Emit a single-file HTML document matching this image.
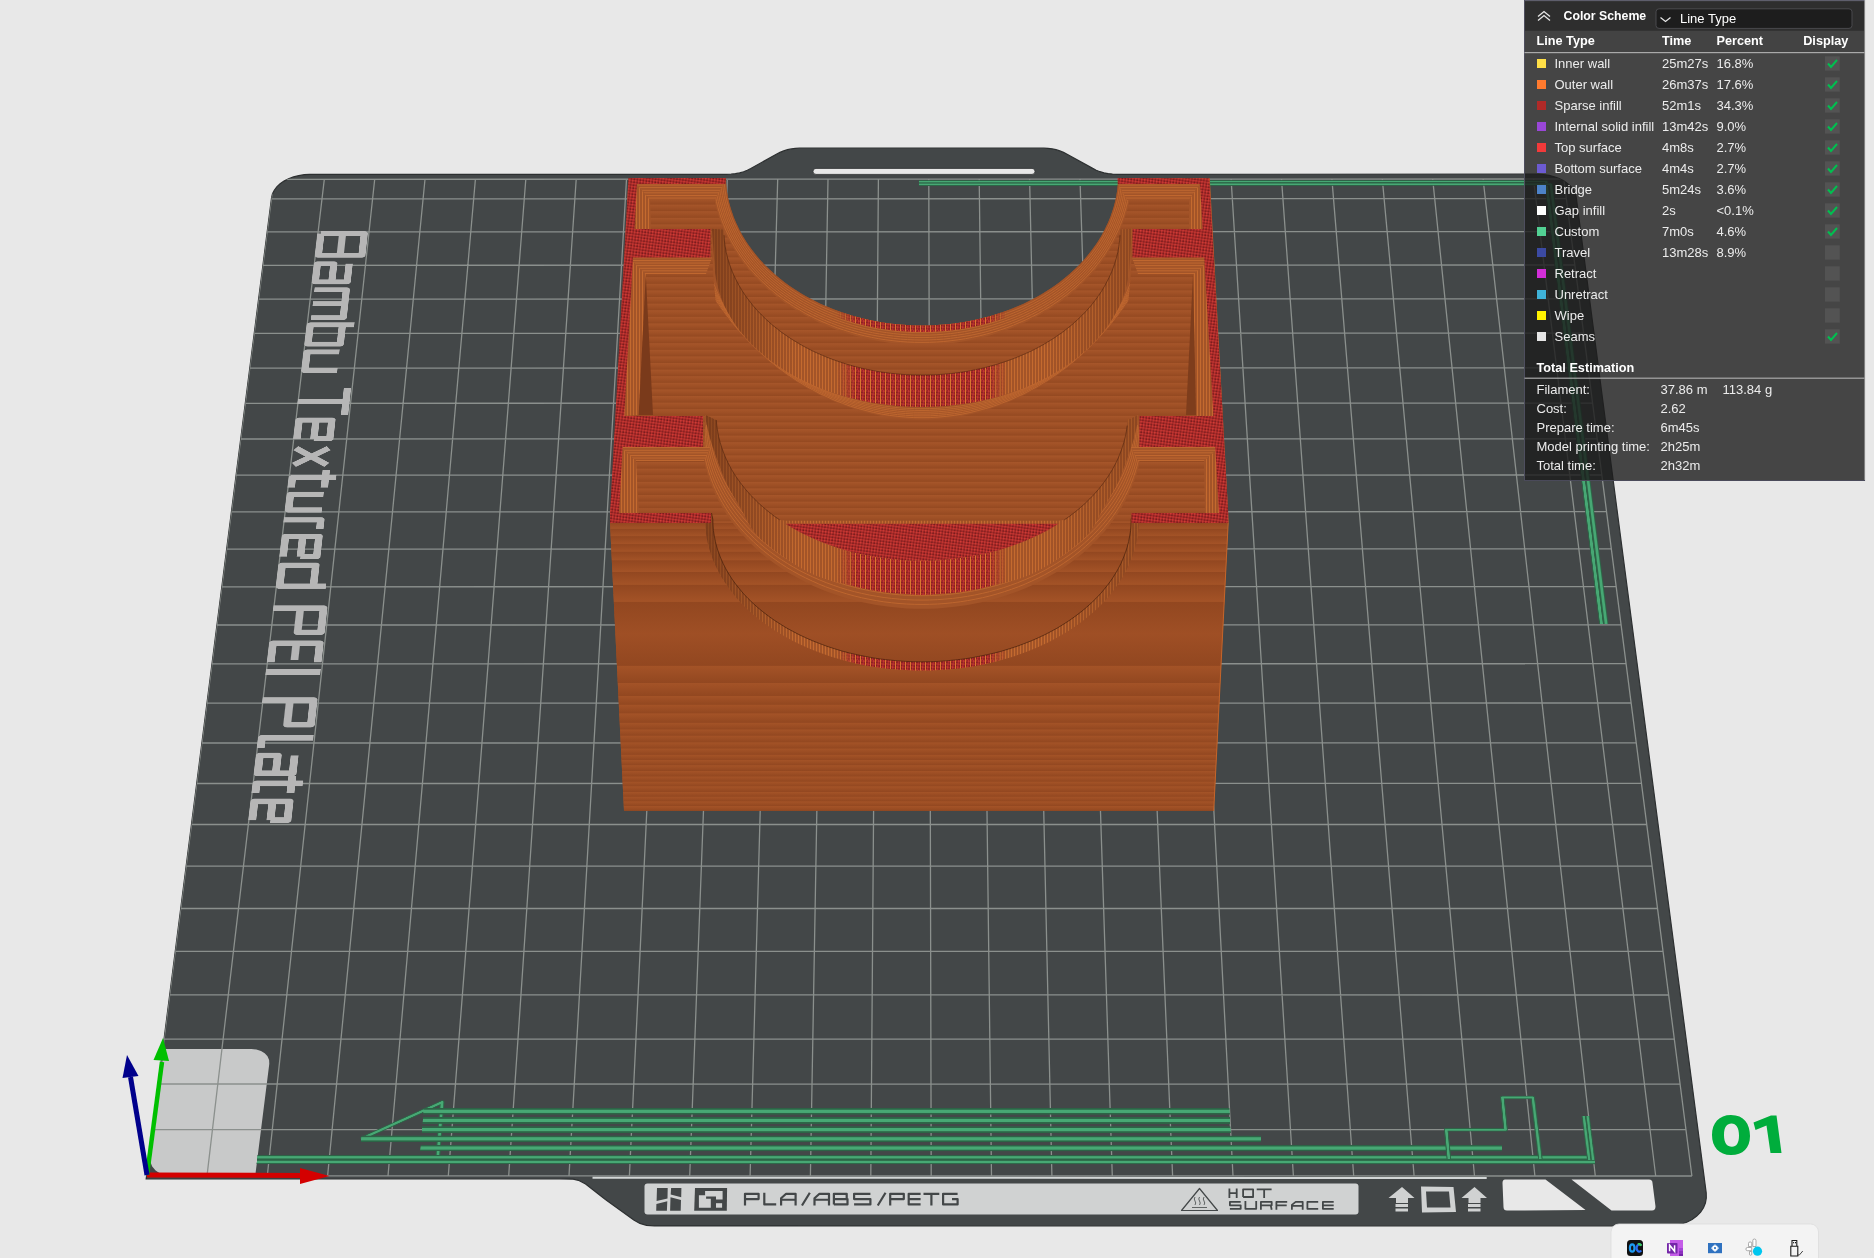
<!DOCTYPE html>
<html><head><meta charset="utf-8"><style>
html,body{margin:0;padding:0;width:1874px;height:1258px;overflow:hidden;background:#e8e8e8;}
.layer{position:absolute;left:0;top:0;}
#ptext{position:absolute;left:0;top:0;transform-origin:0 0;transform:matrix3d(0.503621723,-0.000132204081,0,-1.39485426e-07,-0.0591998042,0.313364712,0,-6.45599567e-05,0,0,1,0,273.934944,179.323232,0,1);}
#pgreen{position:absolute;left:0;top:0;transform-origin:0 0;transform:matrix3d(0.503621723,-0.000132204081,0,-1.39485426e-07,-0.0591998042,0.313364712,0,-6.45599567e-05,0,0,1,0,273.934944,179.323232,0,1);}
#ptext div{position:absolute;left:0;top:0;white-space:nowrap;font-family:"Liberation Sans",sans-serif;color:#b4b4b4;font-size:140px;line-height:1;transform-origin:0 0;}
</style></head><body>
<svg class="layer" width="1874" height="1258" viewBox="0 0 1874 1258">
<path d="M271.6 197.3 L272.5 193.7 L274.3 190.2 L276.8 186.9 L280.1 183.8 L284 181.1 L288.5 178.8 L293.5 176.9 L298.8 175.6 L304.2 174.7 L309.8 174.4 L726.5 174.4 L731.1 174.2 L735.4 173.7 L739.6 172.9 L743.6 171.8 L747.3 170.3 L750.8 168.5 L776.3 154.3 L780 152.4 L783.7 150.9 L787.5 149.7 L791.4 148.9 L795.4 148.4 L799.6 148.2 L1043.9 148.2 L1048 148.3 L1052.1 148.8 L1056 149.7 L1059.8 150.9 L1063.5 152.4 L1067.1 154.3 L1092.7 168.4 L1096.2 170.2 L1100 171.7 L1103.9 172.8 L1108.1 173.6 L1112.5 174.1 L1117.1 174.3 L1538 174.2 L1543.5 174.5 L1549 175.3 L1554.3 176.7 L1559.2 178.5 L1563.7 180.8 L1567.7 183.6 L1571 186.6 L1573.5 189.9 L1575.3 193.4 L1576.2 197 L1706.2 1192.8 L1706.3 1198 L1705.4 1203 L1703.5 1207.8 L1700.6 1212.2 L1696.7 1216.1 L1692.1 1219.5 L1686.7 1222.2 L1680.8 1224.2 L1674.5 1225.4 L1667.8 1225.8 L654.4 1225.9 L646.5 1225.3 L639.9 1223.4 L633.8 1219.9 L605.4 1199.5 L585.6 1184 L578.4 1180.3 L573.1 1179.2 L559.8 1178.8 L146.2 1178.8 Z" fill="#434748" stroke="#2d3031" stroke-width="1.2"/>
<rect x="813" y="168.4" width="222" height="6" rx="3" fill="#e8e8e8" stroke="#2d3031" stroke-width="0.8"/>
<path d="M164.1 1048.1 L150.2 1157.3 L150.4 1162.1 L152.2 1166.6 L155.6 1170.4 L160.2 1173.4 L165.8 1175.2 L172 1175.9 L255.2 1175.9 L269.3 1063.7 L269.1 1059.9 L267.5 1056.3 L264.7 1053.3 L261 1050.9 L256.4 1049.5 L251.4 1049 L164 1049 Z" fill="#c8c9c9"/>
<clipPath id="pclip"><path d="M271.6 197.3 L272.5 193.7 L274.3 190.2 L276.8 186.9 L280.1 183.8 L284 181.1 L288.5 178.8 L293.5 176.9 L298.8 175.6 L304.2 174.7 L309.8 174.4 L726.5 174.4 L731.1 174.2 L735.4 173.7 L739.6 172.9 L743.6 171.8 L747.3 170.3 L750.8 168.5 L776.3 154.3 L780 152.4 L783.7 150.9 L787.5 149.7 L791.4 148.9 L795.4 148.4 L799.6 148.2 L1043.9 148.2 L1048 148.3 L1052.1 148.8 L1056 149.7 L1059.8 150.9 L1063.5 152.4 L1067.1 154.3 L1092.7 168.4 L1096.2 170.2 L1100 171.7 L1103.9 172.8 L1108.1 173.6 L1112.5 174.1 L1117.1 174.3 L1538 174.2 L1543.5 174.5 L1549 175.3 L1554.3 176.7 L1559.2 178.5 L1563.7 180.8 L1567.7 183.6 L1571 186.6 L1573.5 189.9 L1575.3 193.4 L1576.2 197 L1706.2 1192.8 L1706.3 1198 L1705.4 1203 L1703.5 1207.8 L1700.6 1212.2 L1696.7 1216.1 L1692.1 1219.5 L1686.7 1222.2 L1680.8 1224.2 L1674.5 1225.4 L1667.8 1225.8 L654.4 1225.9 L646.5 1225.3 L639.9 1223.4 L633.8 1219.9 L605.4 1199.5 L585.6 1184 L578.4 1180.3 L573.1 1179.2 L559.8 1178.8 L146.2 1178.8 Z"/></clipPath>
<path d="M146.6 1175.9L1691.9 1176M152.5 1129.6L1685.9 1129.7M158.3 1084L1680.1 1084.1M164.1 1039.1L1674.3 1039.2M169.7 994.9L1668.6 995M175.3 951.4L1663 951.4M180.8 908.5L1657.5 908.5M186.2 866.2L1652.1 866.2M191.5 824.5L1646.7 824.5M196.7 783.5L1641.4 783.4M201.9 743L1636.2 742.9M207 703.1L1631.1 703M212 663.8L1626 663.7M217 625L1621.1 624.9M221.9 586.8L1616.1 586.6M226.7 549.1L1611.3 548.9M231.4 511.9L1606.5 511.7M236.1 475.2L1601.8 475M240.8 439L1597.2 438.8M245.3 403.3L1592.6 403.1M249.8 368.1L1588 367.9M254.3 333.4L1583.6 333.1M258.6 299.1L1579.2 298.8M263 265.3L1574.8 265M267.2 231.9L1570.5 231.6M271.4 198.9L1566.3 198.6M273.9 179.3L1563.8 179M146.6 1175.9L273.9 179.3M207 1175.9L324.3 179.3M267.3 1175.9L374.7 179.3M327.6 1175.9L425 179.3M388 1175.9L475.4 179.3M448.3 1175.9L525.8 179.3M508.7 1175.9L576.2 179.3M569 1175.9L626.5 179.2M629.4 1175.9L676.9 179.2M689.7 1175.9L727.3 179.2M750.1 1175.9L777.7 179.2M810.4 1175.9L828 179.2M870.8 1175.9L878.4 179.2M931.2 1175.9L928.8 179.2M991.5 1175.9L979.2 179.2M1051.9 1175.9L1029.6 179.2M1112.3 1175.9L1080 179.2M1172.6 1175.9L1130.4 179.1M1233 1175.9L1180.8 179.1M1293.4 1176L1231.1 179.1M1353.7 1176L1281.5 179.1M1414.1 1176L1331.9 179.1M1474.5 1176L1382.3 179.1M1534.9 1176L1432.7 179.1M1595.3 1176L1483.1 179.1M1655.7 1176L1533.5 179.1M1691.9 1176L1563.8 179" stroke="#8b908d" stroke-width="1.3" fill="none" clip-path="url(#pclip)"/>
<path d="M592.5 1177.8L1486.7 1177.9" stroke="#d2d6d6" stroke-width="2"/>
<rect x="644.5" y="1183.5" width="714" height="31" rx="3" fill="#d0d2d2"/>
<g fill="#434748"><path d="M657 1188.1 L667.7 1188.1 L667.5 1198.5 L656.6 1200.9 Z M656.4 1204.1 L667.3 1201.3 L666.9 1210.7 L656.2 1210.7 Z M671.1 1188.1 L681.4 1188.1 L681.2 1197.2 L670.7 1194.5 Z M670.5 1197.2 L681 1200 L680.7 1210.7 L670.1 1210.7 Z"/><path d="M695 1188.1 L727.1 1188.1 L726.8 1210.7 L694.2 1210.7 Z"/></g><g fill="#d0d2d2"><path d="M705.1 1191 L722.6 1191 L722.6 1199.6 L716 1199.6 L716 1196.4 L706.1 1196.4 L706.1 1198.7 L710.8 1198.7 L710.8 1207.7 L698.9 1207.7 L698.9 1195.3 L705.1 1195.3 Z"/><rect x="716" y="1203.2" width="6.1" height="4.5"/></g>
<path d="M745.00 1205.50 L745.00 1193.80 L758.60 1193.80 L758.60 1199.10 L745.00 1199.10M764.30 1192.70 L764.30 1204.40 L776.20 1204.40M781.10 1205.50 L781.10 1198.25 L786.11 1193.80 L795.60 1193.80 L795.60 1205.50M781.10 1199.74 L795.60 1199.74M801.98 1205.50 L809.82 1192.70M814.50 1205.50 L814.50 1198.25 L819.51 1193.80 L829.00 1193.80 L829.00 1205.50M814.50 1199.74 L829.00 1199.74M833.90 1204.40 L833.90 1193.80 L846.70 1193.80 L846.70 1199.10 L847.50 1199.10 L847.50 1204.40 L833.90 1204.40M833.90 1199.10 L847.50 1199.10M870.40 1193.80 L854.10 1193.80 L854.10 1199.10 L870.40 1199.10 L870.40 1204.40 L854.10 1204.40M877.77 1205.50 L885.53 1192.70M890.20 1205.50 L890.20 1193.80 L903.80 1193.80 L903.80 1199.10 L890.20 1199.10M920.60 1193.80 L908.70 1193.80 L908.70 1204.40 L920.60 1204.40M908.70 1199.10 L920.60 1199.10M923.50 1193.80 L939.30 1193.80M931.40 1193.80 L931.40 1205.50M957.60 1193.80 L943.10 1193.80 L943.10 1204.40 L957.60 1204.40 L957.60 1199.10 L952.02 1199.10" stroke="#434748" stroke-width="2.20" fill="none" stroke-linejoin="round"/><path d="M1229.40 1197.90 L1229.40 1188.40M1236.70 1197.90 L1236.70 1188.40M1229.40 1193.15 L1236.70 1193.15M1243.10 1197.00 L1243.10 1189.30 L1253.10 1189.30 L1253.10 1197.00 L1243.10 1197.00M1256.70 1189.30 L1271.60 1189.30M1264.15 1189.30 L1264.15 1197.90" stroke="#434748" stroke-width="1.80" fill="none" stroke-linejoin="round"/><path d="M1240.70 1201.90 L1229.90 1201.90 L1229.90 1205.35 L1240.70 1205.35 L1240.70 1208.80 L1229.90 1208.80M1245.40 1201.00 L1245.40 1208.80 L1256.20 1208.80 L1256.20 1201.00M1260.90 1209.70 L1260.90 1201.90 L1271.70 1201.90 L1271.70 1205.35 L1260.90 1205.35M1270.70 1205.35 L1271.70 1209.70M1287.20 1201.90 L1276.40 1201.90 L1276.40 1209.70M1276.40 1205.35 L1286.70 1205.35M1291.90 1209.70 L1291.90 1204.86 L1295.68 1201.90 L1302.70 1201.90 L1302.70 1209.70M1291.90 1205.79 L1302.70 1205.79M1318.20 1201.90 L1307.40 1201.90 L1307.40 1208.80 L1318.20 1208.80M1333.70 1201.90 L1322.90 1201.90 L1322.90 1208.80 L1333.70 1208.80M1322.90 1205.35 L1333.70 1205.35" stroke="#434748" stroke-width="1.80" fill="none" stroke-linejoin="round"/>
<path d="M1199.5 1188.5 L1217.5 1210.5 L1181.5 1210.5 Z" fill="none" stroke="#434748" stroke-width="1.2" stroke-linejoin="round"/><path d="M1195 1197 q-1.5 2 0 4 q1.5 2 0 4 M1199.5 1197 q-1.5 2 0 4 q1.5 2 0 4 M1204 1197 q-1.5 2 0 4 q1.5 2 0 4 M1192 1207.5 h15" fill="none" stroke="#434748" stroke-width="0.8"/>
<g fill="#d0d2d2"><path d="M1388.5 1198 L1402 1187 L1414.5 1198 L1408 1198 L1408 1203 L1396 1203 L1396 1198 Z"/><rect x="1395.5" y="1204" width="12.5" height="3"/><rect x="1395.5" y="1208.5" width="12.5" height="3"/><path d="M1461.5 1198 L1474.5 1187 L1487 1198 L1480.5 1198 L1480.5 1203 L1468.5 1203 L1468.5 1198 Z"/><rect x="1468" y="1204" width="12.5" height="3"/><rect x="1468" y="1208.5" width="12.5" height="3"/></g>
<path d="M1421 1186.5 L1453.5 1187 L1456 1212 L1422 1212.5 Z M1426 1191.5 L1449 1191.5 L1450.5 1207.5 L1427 1207.5 Z" fill="#d0d2d2" fill-rule="evenodd"/>
<path d="M1505 1179.5 L1545.5 1179.5 L1585.5 1210 L1507 1210.5 Q1503.5 1210.5 1503.5 1207 L1502.5 1183 Q1502.5 1179.5 1505 1179.5 Z" fill="#e8e8e8"/>
<path d="M1571.5 1179.5 L1649 1179.5 Q1652.5 1179.5 1652.5 1183 L1655.5 1206.5 Q1655.5 1210.5 1652 1210.5 L1611.5 1210.5 Z" fill="#e8e8e8"/>
<path d="M1731 1115 C1744 1115 1750 1124 1750 1136 C1750 1148 1743 1155 1731 1155 C1719 1155 1712 1147 1712 1135 C1712 1123 1719 1115 1731 1115 Z M1731.5 1123.5 C1727 1123.5 1724 1127 1724 1135 C1724 1143 1727 1146.8 1732 1146.8 C1736.5 1146.8 1739 1143 1739 1135.5 C1739 1127.5 1736 1123.5 1731.5 1123.5 Z" fill="#00ad3c" fill-rule="evenodd"/>
<path d="M1753.5 1122.5 L1771 1115.5 L1776.5 1115.5 L1781.5 1153 L1770.5 1153 L1766.5 1125.5 L1755.5 1130 Z" fill="#00ad3c"/>
<path d="M147 1175 L302 1175.5" stroke="#d40000" stroke-width="5"/><path d="M300 1168 L329.5 1176 L300 1184 Z" fill="#d40000"/>
<path d="M147 1175 L162 1062" stroke="#00c000" stroke-width="4.5"/><path d="M153.5 1060 L163 1038 L169 1061 Z" fill="#00c000"/>
<path d="M147 1175 L130.5 1077" stroke="#00008c" stroke-width="5"/><path d="M122.5 1078 L127 1055 L138.5 1076 Z" fill="#00008c"/>
</svg>
<div id="pgreen"><svg width="2600" height="2800" style="position:absolute;left:0;top:-200px;overflow:visible" viewBox="0 -200 2600 2800"><path d="M350 2480 L480 2400 L480 2520" stroke="#2c6446" stroke-width="8.0" fill="none" stroke-linejoin="round"/><path d="M350 2480 L480 2400 L480 2520" stroke="#47a874" stroke-width="4.5" fill="none" stroke-linejoin="round"/><path d="M180 2530 L2402 2530" stroke="#2c6446" stroke-width="10.0" fill="none" stroke-linejoin="round"/><path d="M180 2530 L2402 2530" stroke="#47a874" stroke-width="5.0" fill="none" stroke-linejoin="round"/><path d="M180 2520 L2402 2520" stroke="#2c6446" stroke-width="10.0" fill="none" stroke-linejoin="round"/><path d="M180 2520 L2402 2520" stroke="#47a874" stroke-width="5.0" fill="none" stroke-linejoin="round"/><path d="M450 2420 L1800 2420" stroke="#2c6446" stroke-width="14.0" fill="none" stroke-linejoin="round"/><path d="M450 2420 L1800 2420" stroke="#47a874" stroke-width="6.8" fill="none" stroke-linejoin="round"/><path d="M450 2440 L1800 2440" stroke="#2c6446" stroke-width="14.0" fill="none" stroke-linejoin="round"/><path d="M450 2440 L1800 2440" stroke="#47a874" stroke-width="6.8" fill="none" stroke-linejoin="round"/><path d="M450 2460 L1800 2460" stroke="#2c6446" stroke-width="14.0" fill="none" stroke-linejoin="round"/><path d="M450 2460 L1800 2460" stroke="#47a874" stroke-width="6.8" fill="none" stroke-linejoin="round"/><path d="M350 2480 L1850 2480" stroke="#2c6446" stroke-width="14.0" fill="none" stroke-linejoin="round"/><path d="M350 2480 L1850 2480" stroke="#47a874" stroke-width="6.8" fill="none" stroke-linejoin="round"/><path d="M450 2500 L2250 2500" stroke="#2c6446" stroke-width="14.0" fill="none" stroke-linejoin="round"/><path d="M450 2500 L2250 2500" stroke="#47a874" stroke-width="6.8" fill="none" stroke-linejoin="round"/><path d="M2160 2524 L2160 2460 L2259 2460 L2259 2389.5 L2310 2389.5 L2312 2524" stroke="#2c6446" stroke-width="7.5" fill="none" stroke-linejoin="round"/><path d="M2160 2524 L2160 2460 L2259 2460 L2259 2389.5 L2310 2389.5 L2312 2524" stroke="#47a874" stroke-width="4.0" fill="none" stroke-linejoin="round"/><path d="M2393 2526 L2392 2430" stroke="#2c6446" stroke-width="7.0" fill="none" stroke-linejoin="round"/><path d="M2393 2526 L2392 2430" stroke="#47a874" stroke-width="3.8" fill="none" stroke-linejoin="round"/><path d="M2399.5 2526 L2398.5 2430" stroke="#2c6446" stroke-width="7.0" fill="none" stroke-linejoin="round"/><path d="M2399.5 2526 L2398.5 2430" stroke="#47a874" stroke-width="3.8" fill="none" stroke-linejoin="round"/><path d="M1280 7.5 L2524.5 7.5 L2524.5 1258" stroke="#2c6446" stroke-width="8.5" fill="none" stroke-linejoin="round"/><path d="M1280 7.5 L2524.5 7.5 L2524.5 1258" stroke="#47a874" stroke-width="5.0" fill="none" stroke-linejoin="round"/><path d="M1280 16 L2533 16 L2533 1258" stroke="#2c6446" stroke-width="8.5" fill="none" stroke-linejoin="round"/><path d="M1280 16 L2533 16 L2533 1258" stroke="#47a874" stroke-width="5.0" fill="none" stroke-linejoin="round"/><path d="M106.0 165.1 L191.0 165.1 L191.0 230.6 L106.0 230.6 L106.0 165.1M148.5 165.1 L148.5 230.6M168.0 255.6 L168.0 309.2 L106.0 309.2 L106.0 255.6 L138.0 255.6 L138.0 309.2M106.0 332.4 L168.0 332.4 L168.0 414.2 L106.0 414.2M168.0 373.3 L106.0 373.3M191.0 435.2 L106.0 435.2 L106.0 491.0 L168.0 491.0 L168.0 435.2M168.0 513.6 L106.0 513.6 L106.0 567.0 L168.0 567.0M191.0 616.4 L191.0 692.9M191.0 654.6 L99.0 654.6M138.0 759.1 L168.0 759.1 L168.0 707.2 L106.0 707.2 L106.0 759.1M138.0 707.2 L138.0 759.1M168.0 785.3 L106.0 831.6M106.0 785.3 L168.0 831.6M188.1 866.6 L106.0 866.6 L106.0 893.8M168.0 845.7 L168.0 893.8M168.0 912.7 L106.0 912.7 L106.0 954.7 L168.0 954.7M99.0 981.4 L168.0 981.4 L168.0 1006.4M138.0 1080.0 L168.0 1080.0 L168.0 1026.1 L106.0 1026.1 L106.0 1080.0M138.0 1026.1 L138.0 1080.0M191.0 1158.6 L106.0 1158.6 L106.0 1103.3 L168.0 1103.3 L168.0 1158.6M99.0 1215.9 L191.0 1215.9 L191.0 1278.9 L148.5 1278.9 L148.5 1215.9M191.0 1356.2 L191.0 1307.2 L106.0 1307.2 L106.0 1356.2M148.5 1307.2 L148.5 1350.2M198.0 1380.9 L99.0 1380.9M99.0 1452.3 L191.0 1452.3 L191.0 1514.3 L148.5 1514.3 L148.5 1452.3M198.0 1547.1 L106.0 1547.1 L106.0 1573.1M168.0 1591.1 L168.0 1635.1 L106.0 1635.1 L106.0 1591.1 L138.0 1591.1 L138.0 1635.1M188.1 1659.8 L106.0 1659.8 L106.0 1683.7M168.0 1640.9 L168.0 1683.7M138.0 1749.3 L168.0 1749.3 L168.0 1704.0 L106.0 1704.0 L106.0 1749.3M138.0 1704.0 L138.0 1749.3" stroke="#b6b6b6" stroke-width="14.0" fill="none" stroke-linejoin="round" stroke-linecap="butt"/></svg></div>

<svg class="layer" width="1874" height="1258" viewBox="0 0 1874 1258">
<defs>
<linearGradient id="wg" x1="0" y1="0" x2="0" y2="1"><stop offset="0" stop-color="#a7562a"/><stop offset="0.55" stop-color="#9d4f25"/><stop offset="1" stop-color="#944921"/></linearGradient>
<pattern id="wall" patternUnits="userSpaceOnUse" width="10" height="6.6"><rect width="10" height="6.6" fill="url(#wg)"/></pattern>
<pattern id="red" patternUnits="userSpaceOnUse" width="3" height="3" patternTransform="rotate(8)"><rect width="3" height="3" fill="#ad2b2a"/><rect x="0" y="0" width="1.5" height="1.5" fill="#d23d36"/><rect x="1.5" y="1.5" width="1.4" height="1.4" fill="#681718"/></pattern>
<pattern id="vst" patternUnits="userSpaceOnUse" width="3" height="10"><rect width="3" height="10" fill="#a35428"/><rect x="0" width="1" height="10" fill="#c46a2f"/></pattern>
<pattern id="ring" patternUnits="userSpaceOnUse" width="10" height="2.6"><rect width="10" height="2.6" fill="#a35428"/><rect width="10" height="0.9" fill="#c26930"/></pattern>
<pattern id="redv" patternUnits="userSpaceOnUse" width="5" height="10"><rect width="5" height="10" fill="url(#red)"/><rect x="0" width="1" height="10" fill="#d9772f"/></pattern>
<linearGradient id="gRed" gradientUnits="userSpaceOnUse" x1="780" y1="0" x2="1064" y2="0"><stop offset="0" stop-color="#000"/><stop offset="0.2" stop-color="#000"/><stop offset="0.27" stop-color="#fff"/><stop offset="0.73" stop-color="#fff"/><stop offset="0.8" stop-color="#000"/><stop offset="1" stop-color="#000"/></linearGradient>
<mask id="mRed" maskUnits="userSpaceOnUse" x="0" y="0" width="1874" height="1258"><rect width="1874" height="1258" fill="url(#gRed)"/></mask>
<linearGradient id="gShade" gradientUnits="userSpaceOnUse" x1="700" y1="0" x2="1144" y2="0"><stop offset="0" stop-color="#5e2b12" stop-opacity="0.6"/><stop offset="0.22" stop-color="#5e2b12" stop-opacity="0"/><stop offset="0.78" stop-color="#5e2b12" stop-opacity="0"/><stop offset="1" stop-color="#5e2b12" stop-opacity="0.35"/></linearGradient>
<linearGradient id="gUp" x1="0" y1="0" x2="0" y2="1"><stop offset="0" stop-color="#924720"/><stop offset="1" stop-color="#a45327"/></linearGradient>
<linearGradient id="gDn" x1="0" y1="0" x2="0" y2="1"><stop offset="0" stop-color="#a45327"/><stop offset="1" stop-color="#924720"/></linearGradient>
<linearGradient id="gMid" x1="0" y1="0" x2="0" y2="1"><stop offset="0" stop-color="#924720"/><stop offset="0.5" stop-color="#9f4f25"/><stop offset="1" stop-color="#924720"/></linearGradient>
<clipPath id="frontclip"><path d="M610 522.7 L1228.2 522.7 L1213.7 810.8 L624 810.8 Z"/></clipPath>
</defs>
<path d="M628.5 178 L725.8 178 L726.1 183.8 L726.7 189.7 L727.6 195.5 L728.8 201.2 L730.3 207 L732.1 212.6 L734.1 218.3 L736.5 223.8 L739.1 229.3 L742 234.7 L745.1 240 L748.6 245.2 L752.3 250.3 L756.2 255.3 L760.4 260.2 L764.8 264.9 L769.5 269.6 L774.4 274 L779.5 278.3 L784.8 282.5 L790.3 286.5 L796.1 290.3 L802 294 L808.1 297.5 L814.4 300.8 L820.8 303.9 L827.4 306.8 L834.1 309.5 L841 312 L847.9 314.3 L855 316.4 L862.2 318.3 L869.5 320 L876.8 321.4 L884.3 322.7 L891.7 323.7 L899.3 324.5 L906.8 325 L914.4 325.4 L922 325.5 L929.6 325.4 L937.2 325 L944.7 324.5 L952.3 323.7 L959.7 322.7 L967.2 321.4 L974.5 320 L981.8 318.3 L989 316.4 L996.1 314.3 L1003 312 L1009.9 309.5 L1016.6 306.8 L1023.2 303.9 L1029.6 300.8 L1035.9 297.5 L1042 294 L1047.9 290.3 L1053.7 286.5 L1059.2 282.5 L1064.5 278.3 L1069.6 274 L1074.5 269.6 L1079.2 264.9 L1083.6 260.2 L1087.8 255.3 L1091.7 250.3 L1095.4 245.2 L1098.9 240 L1102 234.7 L1104.9 229.3 L1107.5 223.8 L1109.9 218.3 L1111.9 212.6 L1113.7 207 L1115.2 201.2 L1116.4 195.5 L1117.3 189.7 L1117.9 183.8 L1118.2 178 L1209.3 178.3 L1228.2 522.7 L1213.7 810.8 L624 810.8 L610 522.7 Z" fill="url(#wall)"/>
<g clip-path="url(#frontclip)"><rect x="600" y="522.7" width="640" height="6.1" fill="url(#gUp)"/><rect x="600" y="528.8" width="640" height="7.4" fill="url(#gUp)"/><rect x="600" y="536.2" width="640" height="7.9" fill="url(#gUp)"/><rect x="600" y="544.1" width="640" height="7.7" fill="url(#gUp)"/><rect x="600" y="551.8" width="640" height="8.7" fill="url(#gUp)"/><rect x="600" y="560.5" width="640" height="11.5" fill="url(#gUp)"/><rect x="600" y="572.0" width="640" height="12.9" fill="url(#gUp)"/><rect x="600" y="584.9" width="640" height="17.0" fill="url(#gUp)"/><rect x="600" y="601.9" width="640" height="64.0" fill="url(#gMid)"/><rect x="600" y="665.9" width="640" height="17.1" fill="url(#gDn)"/><rect x="600" y="683.0" width="640" height="13.0" fill="url(#gDn)"/><rect x="600" y="696.0" width="640" height="8.8" fill="url(#gDn)"/><rect x="600" y="704.8" width="640" height="8.8" fill="url(#gDn)"/><rect x="600" y="713.6" width="640" height="9.3" fill="url(#gDn)"/><rect x="600" y="722.9" width="640" height="6.7" fill="url(#gDn)"/><rect x="600" y="729.6" width="640" height="6.2" fill="url(#gDn)"/><rect x="600" y="735.8" width="640" height="6.7" fill="url(#gDn)"/><rect x="600" y="742.5" width="640" height="6.2" fill="url(#gDn)"/><rect x="600" y="748.7" width="640" height="6.2" fill="url(#gDn)"/><rect x="600" y="754.9" width="640" height="5.2" fill="url(#gDn)"/><rect x="600" y="760.1" width="640" height="5.2" fill="url(#gDn)"/><rect x="600" y="765.3" width="640" height="5.7" fill="url(#gDn)"/><rect x="600" y="771.0" width="640" height="5.6" fill="url(#gDn)"/><rect x="600" y="776.6" width="640" height="5.2" fill="url(#gDn)"/><rect x="600" y="781.8" width="640" height="4.7" fill="url(#gDn)"/><rect x="600" y="786.5" width="640" height="5.6" fill="url(#gDn)"/><rect x="600" y="792.1" width="640" height="4.7" fill="url(#gDn)"/><rect x="600" y="796.8" width="640" height="4.7" fill="url(#gDn)"/><rect x="600" y="801.5" width="640" height="4.6" fill="url(#gDn)"/><rect x="600" y="806.1" width="640" height="4.9" fill="url(#gDn)"/></g>
<path d="M1209.3 178.3 L1228.2 522.7 L1213.7 810.8" stroke="#c4652b" stroke-width="1" fill="none"/>
<clipPath id="rb1"><path d="M725.8 178 L726.1 183.8 L726.7 189.7 L727.6 195.5 L728.8 201.2 L730.3 207 L732.1 212.6 L734.1 218.3 L736.5 223.8 L739.1 229.3 L742 234.7 L745.1 240 L748.6 245.2 L752.3 250.3 L756.2 255.3 L760.4 260.2 L764.8 264.9 L769.5 269.6 L774.4 274 L779.5 278.3 L784.8 282.5 L790.3 286.5 L796.1 290.3 L802 294 L808.1 297.5 L814.4 300.8 L820.8 303.9 L827.4 306.8 L834.1 309.5 L841 312 L847.9 314.3 L855 316.4 L862.2 318.3 L869.5 320 L876.8 321.4 L884.3 322.7 L891.7 323.7 L899.3 324.5 L906.8 325 L914.4 325.4 L922 325.5 L929.6 325.4 L937.2 325 L944.7 324.5 L952.3 323.7 L959.7 322.7 L967.2 321.4 L974.5 320 L981.8 318.3 L989 316.4 L996.1 314.3 L1003 312 L1009.9 309.5 L1016.6 306.8 L1023.2 303.9 L1029.6 300.8 L1035.9 297.5 L1042 294 L1047.9 290.3 L1053.7 286.5 L1059.2 282.5 L1064.5 278.3 L1069.6 274 L1074.5 269.6 L1079.2 264.9 L1083.6 260.2 L1087.8 255.3 L1091.7 250.3 L1095.4 245.2 L1098.9 240 L1102 234.7 L1104.9 229.3 L1107.5 223.8 L1109.9 218.3 L1111.9 212.6 L1113.7 207 L1115.2 201.2 L1116.4 195.5 L1117.3 189.7 L1117.9 183.8 L1118.2 178 L1131.9 184 L1131.1 190.5 L1130.1 196.9 L1128.8 203.3 L1127.3 209.7 L1125.4 216 L1123.2 222.2 L1120.8 228.4 L1118 234.5 L1115 240.5 L1111.8 246.4 L1108.2 252.2 L1104.4 257.9 L1100.4 263.4 L1096.1 268.9 L1091.5 274.2 L1086.7 279.3 L1081.7 284.3 L1076.5 289.2 L1071 293.9 L1065.4 298.4 L1059.5 302.7 L1053.4 306.9 L1047.2 310.8 L1040.7 314.6 L1034.1 318.1 L1027.4 321.5 L1020.5 324.6 L1013.5 327.6 L1006.3 330.3 L999 332.8 L991.6 335 L984.1 337.1 L976.6 338.9 L968.9 340.4 L961.2 341.8 L953.4 342.9 L945.6 343.7 L937.8 344.3 L929.9 344.7 L922 344.8 L914.1 344.7 L906.2 344.3 L898.4 343.7 L890.6 342.9 L882.8 341.8 L875.1 340.4 L867.4 338.9 L859.9 337.1 L852.4 335 L845 332.8 L837.7 330.3 L830.5 327.6 L823.5 324.6 L816.6 321.5 L809.9 318.1 L803.3 314.6 L796.8 310.8 L790.6 306.9 L784.5 302.7 L778.6 298.4 L773 293.9 L767.5 289.2 L762.3 284.3 L757.3 279.3 L752.5 274.2 L747.9 268.9 L743.6 263.4 L739.6 257.9 L735.8 252.2 L732.2 246.4 L729 240.5 L726 234.5 L723.2 228.4 L720.8 222.2 L718.6 216 L716.7 209.7 L715.2 203.3 L713.9 196.9 L712.9 190.5 L712.1 184 Z"/></clipPath><path d="M725.8 178 L726.1 183.8 L726.7 189.7 L727.6 195.5 L728.8 201.2 L730.3 207 L732.1 212.6 L734.1 218.3 L736.5 223.8 L739.1 229.3 L742 234.7 L745.1 240 L748.6 245.2 L752.3 250.3 L756.2 255.3 L760.4 260.2 L764.8 264.9 L769.5 269.6 L774.4 274 L779.5 278.3 L784.8 282.5 L790.3 286.5 L796.1 290.3 L802 294 L808.1 297.5 L814.4 300.8 L820.8 303.9 L827.4 306.8 L834.1 309.5 L841 312 L847.9 314.3 L855 316.4 L862.2 318.3 L869.5 320 L876.8 321.4 L884.3 322.7 L891.7 323.7 L899.3 324.5 L906.8 325 L914.4 325.4 L922 325.5 L929.6 325.4 L937.2 325 L944.7 324.5 L952.3 323.7 L959.7 322.7 L967.2 321.4 L974.5 320 L981.8 318.3 L989 316.4 L996.1 314.3 L1003 312 L1009.9 309.5 L1016.6 306.8 L1023.2 303.9 L1029.6 300.8 L1035.9 297.5 L1042 294 L1047.9 290.3 L1053.7 286.5 L1059.2 282.5 L1064.5 278.3 L1069.6 274 L1074.5 269.6 L1079.2 264.9 L1083.6 260.2 L1087.8 255.3 L1091.7 250.3 L1095.4 245.2 L1098.9 240 L1102 234.7 L1104.9 229.3 L1107.5 223.8 L1109.9 218.3 L1111.9 212.6 L1113.7 207 L1115.2 201.2 L1116.4 195.5 L1117.3 189.7 L1117.9 183.8 L1118.2 178 L1131.9 184 L1131.1 190.5 L1130.1 196.9 L1128.8 203.3 L1127.3 209.7 L1125.4 216 L1123.2 222.2 L1120.8 228.4 L1118 234.5 L1115 240.5 L1111.8 246.4 L1108.2 252.2 L1104.4 257.9 L1100.4 263.4 L1096.1 268.9 L1091.5 274.2 L1086.7 279.3 L1081.7 284.3 L1076.5 289.2 L1071 293.9 L1065.4 298.4 L1059.5 302.7 L1053.4 306.9 L1047.2 310.8 L1040.7 314.6 L1034.1 318.1 L1027.4 321.5 L1020.5 324.6 L1013.5 327.6 L1006.3 330.3 L999 332.8 L991.6 335 L984.1 337.1 L976.6 338.9 L968.9 340.4 L961.2 341.8 L953.4 342.9 L945.6 343.7 L937.8 344.3 L929.9 344.7 L922 344.8 L914.1 344.7 L906.2 344.3 L898.4 343.7 L890.6 342.9 L882.8 341.8 L875.1 340.4 L867.4 338.9 L859.9 337.1 L852.4 335 L845 332.8 L837.7 330.3 L830.5 327.6 L823.5 324.6 L816.6 321.5 L809.9 318.1 L803.3 314.6 L796.8 310.8 L790.6 306.9 L784.5 302.7 L778.6 298.4 L773 293.9 L767.5 289.2 L762.3 284.3 L757.3 279.3 L752.5 274.2 L747.9 268.9 L743.6 263.4 L739.6 257.9 L735.8 252.2 L732.2 246.4 L729 240.5 L726 234.5 L723.2 228.4 L720.8 222.2 L718.6 216 L716.7 209.7 L715.2 203.3 L713.9 196.9 L712.9 190.5 L712.1 184 Z" fill="#a35428"/><path d="M723.9 174.1 L724.1 179.5 L724.4 184.9 L725 190.2 L725.9 195.5 L726.9 200.8 L728.3 206.1 L729.8 211.3 L731.6 216.5 L733.6 221.7 L735.9 226.7 L738.4 231.7 L741.1 236.7 L744 241.5 L747.1 246.3 L750.5 251 L754 255.6 L757.8 260.1 L761.8 264.5 L765.9 268.8 L770.3 273 L774.8 277 L779.5 281 L784.4 284.8 L789.5 288.4 L794.7 291.9 L800.1 295.3 L805.6 298.5 L811.2 301.6 L817 304.5 L823 307.3 L829 309.9 L835.2 312.3 L841.4 314.6 L847.8 316.7 L854.3 318.6 L860.8 320.4 L867.4 322 L874.1 323.3 L880.8 324.6 L887.6 325.6 L894.4 326.4 L901.3 327.1 L908.2 327.5 L915.1 327.8 L922 327.9 L928.9 327.8 L935.8 327.5 L942.7 327.1 L949.6 326.4 L956.4 325.6 L963.2 324.6 L969.9 323.3 L976.6 322 L983.2 320.4 L989.7 318.6 L996.2 316.7 L1002.6 314.6 L1008.8 312.3 L1015 309.9 L1021 307.3 L1027 304.5 L1032.8 301.6 L1038.4 298.5 L1043.9 295.3 L1049.3 291.9 L1054.5 288.4 L1059.6 284.8 L1064.5 281 L1069.2 277 L1073.7 273 L1078.1 268.8 L1082.2 264.5 L1086.2 260.1 L1090 255.6 L1093.5 251 L1096.9 246.3 L1100 241.5 L1102.9 236.7 L1105.6 231.7 L1108.1 226.7 L1110.4 221.7 L1112.4 216.5 L1114.2 211.3 L1115.7 206.1 L1117.1 200.8 L1118.1 195.5 L1119 190.2 L1119.6 184.9 L1119.9 179.5 L1120.1 174.1M722.2 173.8 L722.3 179.2 L722.7 184.7 L723.3 190.1 L724.1 195.6 L725.2 201 L726.5 206.3 L728.1 211.6 L729.9 216.9 L732 222.2 L734.2 227.3 L736.7 232.4 L739.5 237.4 L742.4 242.4 L745.6 247.3 L748.9 252.1 L752.5 256.7 L756.3 261.3 L760.3 265.8 L764.5 270.2 L768.9 274.4 L773.5 278.5 L778.3 282.5 L783.2 286.4 L788.3 290.1 L793.6 293.7 L799 297.1 L804.5 300.4 L810.3 303.6 L816.1 306.5 L822.1 309.4 L828.2 312 L834.4 314.5 L840.7 316.8 L847.1 318.9 L853.7 320.9 L860.3 322.7 L866.9 324.3 L873.7 325.7 L880.5 326.9 L887.3 327.9 L894.2 328.8 L901.1 329.5 L908.1 329.9 L915 330.2 L922 330.3 L929 330.2 L935.9 329.9 L942.9 329.5 L949.8 328.8 L956.7 327.9 L963.5 326.9 L970.3 325.7 L977.1 324.3 L983.7 322.7 L990.3 320.9 L996.9 318.9 L1003.3 316.8 L1009.6 314.5 L1015.8 312 L1021.9 309.4 L1027.9 306.5 L1033.7 303.6 L1039.5 300.4 L1045 297.1 L1050.4 293.7 L1055.7 290.1 L1060.8 286.4 L1065.7 282.5 L1070.5 278.5 L1075.1 274.4 L1079.5 270.2 L1083.7 265.8 L1087.7 261.3 L1091.5 256.7 L1095.1 252 L1098.4 247.3 L1101.6 242.4 L1104.5 237.4 L1107.3 232.4 L1109.8 227.3 L1112 222.2 L1114.1 216.9 L1115.9 211.6 L1117.5 206.3 L1118.8 201 L1119.9 195.6 L1120.7 190.1 L1121.3 184.7 L1121.7 179.2 L1121.8 173.8M720.4 173.4 L720.5 179 L720.9 184.5 L721.5 190.1 L722.4 195.6 L723.5 201.1 L724.8 206.5 L726.4 212 L728.2 217.3 L730.3 222.6 L732.6 227.9 L735.1 233.1 L737.8 238.2 L740.8 243.3 L744 248.2 L747.4 253.1 L751 257.8 L754.9 262.5 L758.9 267.1 L763.1 271.5 L767.6 275.8 L772.2 280 L777 284.1 L782 288 L787.1 291.8 L792.4 295.5 L797.9 299 L803.5 302.3 L809.3 305.5 L815.2 308.5 L821.2 311.4 L827.4 314.1 L833.6 316.6 L840 319 L846.5 321.1 L853.1 323.1 L859.7 324.9 L866.4 326.6 L873.2 328 L880.1 329.3 L887 330.3 L893.9 331.2 L900.9 331.9 L907.9 332.3 L915 332.6 L922 332.7 L929 332.6 L936.1 332.3 L943.1 331.9 L950.1 331.2 L957 330.3 L963.9 329.3 L970.8 328 L977.6 326.6 L984.3 324.9 L990.9 323.1 L997.5 321.1 L1004 319 L1010.4 316.6 L1016.6 314.1 L1022.8 311.4 L1028.8 308.5 L1034.7 305.5 L1040.5 302.3 L1046.1 299 L1051.6 295.5 L1056.9 291.8 L1062 288 L1067 284.1 L1071.8 280 L1076.4 275.8 L1080.9 271.5 L1085.1 267.1 L1089.1 262.5 L1093 257.8 L1096.6 253.1 L1100 248.2 L1103.2 243.3 L1106.2 238.2 L1108.9 233.1 L1111.4 227.9 L1113.7 222.6 L1115.8 217.3 L1117.6 212 L1119.2 206.5 L1120.5 201.1 L1121.6 195.6 L1122.5 190.1 L1123.1 184.5 L1123.5 179 L1123.6 173.4M718.6 173.1 L718.8 178.7 L719.1 184.4 L719.8 190 L720.6 195.6 L721.7 201.2 L723.1 206.8 L724.7 212.3 L726.5 217.7 L728.6 223.1 L730.9 228.5 L733.5 233.8 L736.2 239 L739.2 244.1 L742.5 249.2 L745.9 254.1 L749.5 258.9 L753.4 263.7 L757.5 268.3 L761.8 272.8 L766.2 277.2 L770.9 281.5 L775.7 285.7 L780.7 289.7 L785.9 293.5 L791.3 297.2 L796.8 300.8 L802.5 304.2 L808.3 307.4 L814.2 310.5 L820.3 313.4 L826.5 316.2 L832.9 318.7 L839.3 321.1 L845.8 323.3 L852.5 325.4 L859.2 327.2 L865.9 328.9 L872.8 330.3 L879.7 331.6 L886.7 332.7 L893.7 333.6 L900.7 334.3 L907.8 334.8 L914.9 335.1 L922 335.1 L929.1 335.1 L936.2 334.8 L943.3 334.3 L950.3 333.6 L957.3 332.7 L964.3 331.6 L971.2 330.3 L978.1 328.9 L984.8 327.2 L991.5 325.4 L998.2 323.3 L1004.7 321.1 L1011.1 318.7 L1017.5 316.2 L1023.7 313.4 L1029.8 310.5 L1035.7 307.4 L1041.5 304.2 L1047.2 300.8 L1052.7 297.2 L1058.1 293.5 L1063.3 289.7 L1068.3 285.7 L1073.1 281.5 L1077.8 277.2 L1082.2 272.8 L1086.5 268.3 L1090.6 263.7 L1094.5 258.9 L1098.1 254.1 L1101.5 249.2 L1104.8 244.1 L1107.8 239 L1110.5 233.8 L1113.1 228.5 L1115.4 223.1 L1117.5 217.7 L1119.3 212.3 L1120.9 206.8 L1122.3 201.2 L1123.4 195.6 L1124.2 190 L1124.9 184.4 L1125.2 178.7 L1125.3 173.1M716.9 172.7 L717 178.4 L717.4 184.2 L718 189.9 L718.9 195.6 L720 201.3 L721.4 207 L723 212.6 L724.8 218.1 L726.9 223.6 L729.3 229.1 L731.8 234.5 L734.6 239.7 L737.6 245 L740.9 250.1 L744.4 255.1 L748.1 260.1 L752 264.9 L756.1 269.6 L760.4 274.2 L764.9 278.7 L769.6 283 L774.5 287.2 L779.5 291.3 L784.8 295.2 L790.2 299 L795.7 302.6 L801.4 306.1 L807.3 309.4 L813.3 312.5 L819.4 315.5 L825.7 318.3 L832.1 320.9 L838.6 323.3 L845.2 325.6 L851.8 327.6 L858.6 329.5 L865.5 331.2 L872.4 332.7 L879.4 334 L886.4 335.1 L893.5 336 L900.6 336.7 L907.7 337.2 L914.8 337.5 L922 337.6 L929.2 337.5 L936.3 337.2 L943.4 336.7 L950.5 336 L957.6 335.1 L964.6 334 L971.6 332.7 L978.5 331.2 L985.4 329.5 L992.2 327.6 L998.8 325.6 L1005.4 323.3 L1011.9 320.9 L1018.3 318.3 L1024.6 315.5 L1030.7 312.5 L1036.7 309.4 L1042.6 306.1 L1048.3 302.6 L1053.8 299 L1059.2 295.2 L1064.5 291.3 L1069.5 287.2 L1074.4 283 L1079.1 278.7 L1083.6 274.2 L1087.9 269.6 L1092 264.9 L1095.9 260.1 L1099.6 255.1 L1103.1 250.1 L1106.4 245 L1109.4 239.7 L1112.2 234.5 L1114.7 229.1 L1117.1 223.6 L1119.2 218.1 L1121 212.6 L1122.6 207 L1124 201.3 L1125.1 195.6 L1126 189.9 L1126.6 184.2 L1127 178.4 L1127.1 172.7M715.1 172.3 L715.3 178.2 L715.6 184 L716.3 189.8 L717.1 195.7 L718.3 201.4 L719.6 207.2 L721.3 212.9 L723.1 218.5 L725.3 224.1 L727.6 229.7 L730.2 235.1 L733 240.5 L736.1 245.8 L739.3 251 L742.8 256.1 L746.6 261.2 L750.5 266.1 L754.6 270.9 L759 275.5 L763.5 280.1 L768.3 284.5 L773.2 288.8 L778.3 292.9 L783.6 296.9 L789 300.8 L794.6 304.4 L800.4 308 L806.3 311.3 L812.4 314.5 L818.6 317.5 L824.9 320.4 L831.3 323 L837.9 325.5 L844.5 327.8 L851.2 329.9 L858.1 331.8 L865 333.5 L872 335 L879 336.3 L886.1 337.4 L893.2 338.3 L900.4 339.1 L907.6 339.6 L914.8 339.9 L922 340 L929.2 339.9 L936.4 339.6 L943.6 339.1 L950.8 338.3 L957.9 337.4 L965 336.3 L972 335 L979 333.5 L985.9 331.8 L992.8 329.9 L999.5 327.8 L1006.1 325.5 L1012.7 323 L1019.1 320.4 L1025.4 317.5 L1031.6 314.5 L1037.7 311.3 L1043.6 308 L1049.4 304.4 L1055 300.8 L1060.4 296.9 L1065.7 292.9 L1070.8 288.8 L1075.7 284.5 L1080.5 280.1 L1085 275.5 L1089.4 270.9 L1093.5 266.1 L1097.4 261.2 L1101.2 256.1 L1104.7 251 L1107.9 245.8 L1111 240.5 L1113.8 235.1 L1116.4 229.7 L1118.7 224.1 L1120.9 218.5 L1122.7 212.9 L1124.4 207.2 L1125.7 201.4 L1126.9 195.7 L1127.7 189.8 L1128.4 184 L1128.7 178.2 L1128.9 172.3M713.4 172 L713.5 177.9 L713.9 183.9 L714.5 189.8 L715.4 195.7 L716.5 201.6 L717.9 207.4 L719.6 213.2 L721.4 218.9 L723.6 224.6 L725.9 230.3 L728.6 235.8 L731.4 241.3 L734.5 246.7 L737.8 252 L741.3 257.2 L745.1 262.3 L749 267.3 L753.2 272.1 L757.6 276.9 L762.2 281.5 L767 286 L771.9 290.3 L777.1 294.6 L782.4 298.6 L787.9 302.5 L793.5 306.3 L799.4 309.8 L805.3 313.3 L811.4 316.5 L817.7 319.6 L824.1 322.4 L830.5 325.1 L837.1 327.7 L843.8 330 L850.6 332.1 L857.5 334 L864.5 335.8 L871.5 337.3 L878.6 338.7 L885.8 339.8 L893 340.7 L900.2 341.5 L907.4 342 L914.7 342.3 L922 342.4 L929.3 342.3 L936.6 342 L943.8 341.5 L951 340.7 L958.2 339.8 L965.4 338.7 L972.5 337.3 L979.5 335.8 L986.5 334 L993.4 332.1 L1000.2 330 L1006.9 327.7 L1013.5 325.1 L1019.9 322.4 L1026.3 319.6 L1032.6 316.5 L1038.7 313.3 L1044.6 309.8 L1050.5 306.3 L1056.1 302.5 L1061.6 298.6 L1066.9 294.6 L1072.1 290.3 L1077 286 L1081.8 281.5 L1086.4 276.9 L1090.8 272.1 L1095 267.3 L1098.9 262.3 L1102.7 257.2 L1106.2 252 L1109.5 246.7 L1112.6 241.3 L1115.4 235.8 L1118.1 230.3 L1120.4 224.6 L1122.6 218.9 L1124.4 213.2 L1126.1 207.4 L1127.5 201.6 L1128.6 195.7 L1129.5 189.8 L1130.1 183.9 L1130.5 177.9 L1130.6 172" stroke="#c06830" stroke-width="0.9" fill="none" clip-path="url(#rb1)"/>
<path d="M814.4 300.8 L820.8 303.9 L827.4 306.8 L834.1 309.5 L841 312 L847.9 314.3 L855 316.4 L862.2 318.3 L869.5 320 L876.8 321.4 L884.3 322.7 L891.7 323.7 L899.3 324.5 L906.8 325 L914.4 325.4 L922 325.5 L929.6 325.4 L937.2 325 L944.7 324.5 L952.3 323.7 L959.7 322.7 L967.2 321.4 L974.5 320 L981.8 318.3 L989 316.4 L996.1 314.3 L1003 312 L1009.9 309.5 L1016.6 306.8 L1023.2 303.9 L1029.6 300.8 L1029.6 307.3 L1023.2 310.4 L1016.6 313.3 L1009.9 316 L1003 318.5 L996.1 320.8 L989 322.9 L981.8 324.8 L974.5 326.5 L967.2 327.9 L959.7 329.2 L952.3 330.2 L944.7 331 L937.2 331.5 L929.6 331.9 L922 332 L914.4 331.9 L906.8 331.5 L899.3 331 L891.7 330.2 L884.3 329.2 L876.8 327.9 L869.5 326.5 L862.2 324.8 L855 322.9 L847.9 320.8 L841 318.5 L834.1 316 L827.4 313.3 L820.8 310.4 L814.4 307.3 Z" fill="url(#redv)" mask="url(#mRed)"/>
<clipPath id="rb2"><path d="M711.9 228.7 L723.8 229.5 L724 235.2 L724.4 240.9 L725.2 246.6 L726.2 252.3 L727.6 257.9 L729.3 263.5 L731.2 269 L733.5 274.5 L736.1 279.9 L738.9 285.2 L742 290.5 L745.4 295.6 L749.1 300.6 L753 305.6 L757.2 310.4 L761.7 315.1 L766.4 319.6 L771.3 324.1 L776.5 328.3 L781.9 332.5 L787.5 336.4 L793.3 340.2 L799.3 343.8 L805.5 347.3 L811.9 350.6 L818.4 353.6 L825.2 356.5 L832 359.2 L839 361.7 L846.2 364 L853.4 366.1 L860.8 368 L868.2 369.6 L875.7 371.1 L883.3 372.3 L891 373.3 L898.7 374.1 L906.4 374.7 L914.2 375 L922 375.1 L929.8 375 L937.6 374.7 L945.3 374.1 L953 373.3 L960.7 372.3 L968.3 371.1 L975.8 369.6 L983.2 368 L990.6 366.1 L997.8 364 L1005 361.7 L1012 359.2 L1018.8 356.5 L1025.6 353.6 L1032.1 350.6 L1038.5 347.3 L1044.7 343.8 L1050.7 340.2 L1056.5 336.4 L1062.1 332.5 L1067.5 328.3 L1072.7 324.1 L1077.6 319.6 L1082.3 315.1 L1086.8 310.4 L1091 305.6 L1094.9 300.6 L1098.6 295.6 L1102 290.5 L1105.1 285.2 L1107.9 279.9 L1110.5 274.5 L1112.8 269 L1114.7 263.5 L1116.4 257.9 L1117.8 252.3 L1118.8 246.6 L1119.6 240.9 L1120 235.2 L1120.2 229.5 L1132.1 228.7 L1131.1 271.6 L1128.3 302 L1124.5 307.4 L1120.6 312.8 L1116.6 318 L1112.5 323.1 L1108.3 328.2 L1104 333.1 L1099.7 337.8 L1095.2 342.5 L1090.7 347.1 L1086.1 351.5 L1081.4 355.8 L1076.6 360 L1071.8 364 L1066.9 368 L1061.9 371.7 L1056.9 375.4 L1051.7 378.9 L1046.6 382.3 L1041.3 385.5 L1036 388.7 L1030.7 391.6 L1025.3 394.4 L1019.8 397.1 L1014.3 399.6 L1008.7 402 L1003.1 404.3 L997.5 406.3 L991.9 408.3 L986.1 410.1 L980.4 411.7 L974.7 413.2 L968.9 414.5 L963.1 415.7 L957.2 416.7 L951.4 417.5 L945.5 418.2 L939.7 418.8 L933.8 419.2 L927.9 419.4 L922 419.5 L916.1 419.4 L910.2 419.2 L904.3 418.8 L898.5 418.2 L892.6 417.5 L886.8 416.7 L880.9 415.7 L875.1 414.5 L869.3 413.2 L863.6 411.7 L857.9 410.1 L852.1 408.3 L846.5 406.3 L840.9 404.3 L835.3 402 L829.7 399.6 L824.2 397.1 L818.7 394.4 L813.3 391.6 L808 388.7 L802.7 385.5 L797.4 382.3 L792.3 378.9 L787.1 375.4 L782.1 371.7 L777.1 368 L772.2 364 L767.4 360 L762.6 355.8 L757.9 351.5 L753.3 347.1 L748.8 342.5 L744.3 337.8 L740 333.1 L735.7 328.2 L731.5 323.1 L727.4 318 L723.4 312.8 L719.5 307.4 L715.7 302 L712.9 271.6 Z"/></clipPath><path d="M711.9 228.7 L723.8 229.5 L724 235.2 L724.4 240.9 L725.2 246.6 L726.2 252.3 L727.6 257.9 L729.3 263.5 L731.2 269 L733.5 274.5 L736.1 279.9 L738.9 285.2 L742 290.5 L745.4 295.6 L749.1 300.6 L753 305.6 L757.2 310.4 L761.7 315.1 L766.4 319.6 L771.3 324.1 L776.5 328.3 L781.9 332.5 L787.5 336.4 L793.3 340.2 L799.3 343.8 L805.5 347.3 L811.9 350.6 L818.4 353.6 L825.2 356.5 L832 359.2 L839 361.7 L846.2 364 L853.4 366.1 L860.8 368 L868.2 369.6 L875.7 371.1 L883.3 372.3 L891 373.3 L898.7 374.1 L906.4 374.7 L914.2 375 L922 375.1 L929.8 375 L937.6 374.7 L945.3 374.1 L953 373.3 L960.7 372.3 L968.3 371.1 L975.8 369.6 L983.2 368 L990.6 366.1 L997.8 364 L1005 361.7 L1012 359.2 L1018.8 356.5 L1025.6 353.6 L1032.1 350.6 L1038.5 347.3 L1044.7 343.8 L1050.7 340.2 L1056.5 336.4 L1062.1 332.5 L1067.5 328.3 L1072.7 324.1 L1077.6 319.6 L1082.3 315.1 L1086.8 310.4 L1091 305.6 L1094.9 300.6 L1098.6 295.6 L1102 290.5 L1105.1 285.2 L1107.9 279.9 L1110.5 274.5 L1112.8 269 L1114.7 263.5 L1116.4 257.9 L1117.8 252.3 L1118.8 246.6 L1119.6 240.9 L1120 235.2 L1120.2 229.5 L1132.1 228.7 L1131.1 271.6 L1128.3 302 L1124.5 307.4 L1120.6 312.8 L1116.6 318 L1112.5 323.1 L1108.3 328.2 L1104 333.1 L1099.7 337.8 L1095.2 342.5 L1090.7 347.1 L1086.1 351.5 L1081.4 355.8 L1076.6 360 L1071.8 364 L1066.9 368 L1061.9 371.7 L1056.9 375.4 L1051.7 378.9 L1046.6 382.3 L1041.3 385.5 L1036 388.7 L1030.7 391.6 L1025.3 394.4 L1019.8 397.1 L1014.3 399.6 L1008.7 402 L1003.1 404.3 L997.5 406.3 L991.9 408.3 L986.1 410.1 L980.4 411.7 L974.7 413.2 L968.9 414.5 L963.1 415.7 L957.2 416.7 L951.4 417.5 L945.5 418.2 L939.7 418.8 L933.8 419.2 L927.9 419.4 L922 419.5 L916.1 419.4 L910.2 419.2 L904.3 418.8 L898.5 418.2 L892.6 417.5 L886.8 416.7 L880.9 415.7 L875.1 414.5 L869.3 413.2 L863.6 411.7 L857.9 410.1 L852.1 408.3 L846.5 406.3 L840.9 404.3 L835.3 402 L829.7 399.6 L824.2 397.1 L818.7 394.4 L813.3 391.6 L808 388.7 L802.7 385.5 L797.4 382.3 L792.3 378.9 L787.1 375.4 L782.1 371.7 L777.1 368 L772.2 364 L767.4 360 L762.6 355.8 L757.9 351.5 L753.3 347.1 L748.8 342.5 L744.3 337.8 L740 333.1 L735.7 328.2 L731.5 323.1 L727.4 318 L723.4 312.8 L719.5 307.4 L715.7 302 L712.9 271.6 Z" fill="#a35428"/><path d="M705.8 237 L705.9 243 L706.3 249 L706.9 255 L707.9 260.9 L709 266.8 L710.5 272.7 L712.2 278.5 L714.1 284.3 L716.3 290.1 L718.8 295.7 L721.5 301.3 L724.5 306.8 L727.6 312.3 L731.1 317.6 L734.7 322.9 L738.6 328 L742.7 333 L747.1 337.9 L751.6 342.7 L756.3 347.4 L761.3 351.9 L766.4 356.3 L771.8 360.5 L777.3 364.6 L783 368.5 L788.9 372.3 L794.9 375.9 L801.1 379.3 L807.4 382.6 L813.9 385.7 L820.5 388.6 L827.2 391.3 L834 393.9 L841 396.2 L848 398.3 L855.2 400.3 L862.4 402 L869.7 403.6 L877 404.9 L884.4 406.1 L891.9 407 L899.4 407.8 L906.9 408.3 L914.5 408.6 L922 408.7 L929.5 408.6 L937.1 408.3 L944.6 407.8 L952.1 407 L959.6 406.1 L967 404.9 L974.3 403.6 L981.6 402 L988.8 400.3 L996 398.3 L1003 396.2 L1010 393.9 L1016.8 391.3 L1023.5 388.6 L1030.1 385.7 L1036.6 382.6 L1042.9 379.3 L1049.1 375.9 L1055.1 372.3 L1061 368.5 L1066.7 364.6 L1072.2 360.5 L1077.6 356.3 L1082.7 351.9 L1087.7 347.4 L1092.4 342.7 L1096.9 337.9 L1101.3 333 L1105.4 328 L1109.3 322.9 L1112.9 317.6 L1116.4 312.3 L1119.5 306.8 L1122.5 301.3 L1125.2 295.7 L1127.7 290.1 L1129.9 284.3 L1131.8 278.5 L1133.5 272.7 L1135 266.8 L1136.1 260.9 L1137.1 255 L1137.7 249 L1138.1 243 L1138.2 237M697.2 213.5 L697.4 220.4 L697.8 227.3 L698.4 234.1 L699.4 240.9 L700.6 247.7 L702.1 254.5 L703.9 261.2 L705.9 267.8 L708.2 274.4 L710.8 280.9 L713.6 287.3 L716.6 293.6 L720 299.9 L723.5 306 L727.3 312 L731.4 317.9 L735.6 323.7 L740.1 329.3 L744.9 334.8 L749.8 340.1 L755 345.3 L760.3 350.4 L765.9 355.2 L771.6 359.9 L777.5 364.4 L783.6 368.7 L789.9 372.9 L796.3 376.8 L802.9 380.6 L809.6 384.1 L816.5 387.4 L823.5 390.6 L830.6 393.5 L837.8 396.2 L845.1 398.6 L852.5 400.9 L860 402.9 L867.6 404.6 L875.3 406.2 L883 407.5 L890.7 408.6 L898.5 409.4 L906.3 410 L914.2 410.4 L922 410.5 L929.8 410.4 L937.7 410 L945.5 409.4 L953.3 408.6 L961 407.5 L968.7 406.2 L976.4 404.6 L984 402.9 L991.5 400.9 L998.9 398.6 L1006.2 396.2 L1013.4 393.5 L1020.5 390.6 L1027.5 387.4 L1034.4 384.1 L1041.1 380.6 L1047.7 376.8 L1054.1 372.9 L1060.4 368.7 L1066.5 364.4 L1072.4 359.9 L1078.1 355.2 L1083.7 350.4 L1089 345.3 L1094.2 340.1 L1099.1 334.8 L1103.9 329.3 L1108.4 323.7 L1112.6 317.9 L1116.7 312 L1120.5 306 L1124 299.9 L1127.4 293.6 L1130.4 287.3 L1133.2 280.9 L1135.8 274.4 L1138.1 267.8 L1140.1 261.2 L1141.9 254.5 L1143.4 247.7 L1144.6 240.9 L1145.6 234.1 L1146.2 227.3 L1146.6 220.4 L1146.8 213.5M688.7 190 L688.8 197.8 L689.2 205.5 L689.9 213.3 L690.9 221 L692.2 228.6 L693.8 236.3 L695.6 243.8 L697.7 251.3 L700.1 258.7 L702.7 266.1 L705.7 273.3 L708.8 280.4 L712.3 287.5 L716 294.4 L719.9 301.2 L724.1 307.8 L728.6 314.3 L733.2 320.7 L738.1 326.9 L743.3 332.9 L748.6 338.8 L754.2 344.4 L759.9 349.9 L765.9 355.2 L772 360.3 L778.3 365.2 L784.9 369.9 L791.5 374.3 L798.4 378.5 L805.3 382.5 L812.5 386.3 L819.7 389.8 L827.1 393.1 L834.6 396.1 L842.2 398.9 L849.9 401.4 L857.7 403.7 L865.6 405.7 L873.5 407.4 L881.5 408.9 L889.5 410.1 L897.6 411.1 L905.7 411.8 L913.9 412.2 L922 412.3 L930.1 412.2 L938.3 411.8 L946.4 411.1 L954.5 410.1 L962.5 408.9 L970.5 407.4 L978.4 405.7 L986.3 403.7 L994.1 401.4 L1001.8 398.9 L1009.4 396.1 L1016.9 393.1 L1024.3 389.8 L1031.5 386.3 L1038.7 382.5 L1045.6 378.5 L1052.5 374.3 L1059.1 369.9 L1065.7 365.2 L1072 360.3 L1078.1 355.2 L1084.1 349.9 L1089.8 344.4 L1095.4 338.8 L1100.7 332.9 L1105.9 326.9 L1110.8 320.7 L1115.4 314.3 L1119.9 307.8 L1124.1 301.2 L1128 294.4 L1131.7 287.5 L1135.2 280.4 L1138.3 273.3 L1141.3 266.1 L1143.9 258.7 L1146.3 251.3 L1148.4 243.8 L1150.2 236.3 L1151.8 228.6 L1153.1 221 L1154.1 213.3 L1154.8 205.5 L1155.2 197.8 L1155.3 190M680.2 170 L680.4 178.6 L681 187.1 L681.8 195.6 L682.9 204.1 L684.3 212.6 L686 220.9 L688 229.3 L690.3 237.5 L692.8 245.7 L695.6 253.7 L698.7 261.7 L702.1 269.5 L705.7 277.3 L709.5 284.9 L713.7 292.3 L718 299.6 L722.7 306.8 L727.5 313.7 L732.6 320.5 L737.9 327.1 L743.5 333.6 L749.2 339.8 L755.2 345.8 L761.3 351.6 L767.7 357.2 L774.2 362.5 L780.9 367.6 L787.8 372.5 L794.8 377.1 L802 381.5 L809.4 385.6 L816.8 389.5 L824.4 393.1 L832.2 396.4 L840 399.4 L847.9 402.2 L855.9 404.7 L864 406.9 L872.2 408.8 L880.4 410.4 L888.6 411.7 L896.9 412.8 L905.3 413.5 L913.6 414 L922 414.1 L930.4 414 L938.7 413.5 L947.1 412.8 L955.4 411.7 L963.6 410.4 L971.8 408.8 L980 406.9 L988.1 404.7 L996.1 402.2 L1004 399.4 L1011.8 396.4 L1019.6 393.1 L1027.2 389.5 L1034.6 385.6 L1042 381.5 L1049.2 377.1 L1056.2 372.5 L1063.1 367.6 L1069.8 362.5 L1076.3 357.2 L1082.7 351.6 L1088.8 345.8 L1094.8 339.8 L1100.5 333.6 L1106.1 327.1 L1111.4 320.5 L1116.5 313.7 L1121.3 306.8 L1126 299.6 L1130.3 292.3 L1134.5 284.9 L1138.3 277.3 L1141.9 269.5 L1145.3 261.7 L1148.4 253.7 L1151.2 245.7 L1153.7 237.5 L1156 229.3 L1158 220.9 L1159.7 212.6 L1161.1 204.1 L1162.2 195.6 L1163 187.1 L1163.6 178.6 L1163.8 170M672.8 170 L673.8 178.9 L675 187.7 L676.4 196.5 L678.2 205.2 L680.2 213.8 L682.4 222.4 L684.9 230.9 L687.7 239.3 L690.7 247.6 L694 255.8 L697.5 263.9 L701.2 271.8 L705.2 279.6 L709.4 287.3 L713.9 294.8 L718.5 302.1 L723.4 309.3 L728.5 316.2 L733.8 323 L739.3 329.7 L745 336.1 L750.9 342.3 L757 348.3 L763.2 354 L769.6 359.6 L776.2 364.9 L782.9 370 L789.8 374.8 L796.8 379.4 L804 383.7 L811.3 387.8 L818.7 391.6 L826.2 395.2 L833.8 398.4 L841.5 401.4 L849.3 404.2 L857.2 406.6 L865.2 408.8 L873.2 410.7 L881.2 412.3 L889.3 413.6 L897.5 414.6 L905.6 415.3 L913.8 415.8 L922 415.9 L930.2 415.8 L938.4 415.3 L946.5 414.6 L954.7 413.6 L962.8 412.3 L970.8 410.7 L978.8 408.8 L986.8 406.6 L994.7 404.2 L1002.5 401.4 L1010.2 398.4 L1017.8 395.2 L1025.3 391.6 L1032.7 387.8 L1040 383.7 L1047.2 379.4 L1054.2 374.8 L1061.1 370 L1067.8 364.9 L1074.4 359.6 L1080.8 354 L1087 348.3 L1093.1 342.3 L1099 336.1 L1104.7 329.7 L1110.2 323 L1115.5 316.2 L1120.6 309.3 L1125.5 302.1 L1130.1 294.8 L1134.6 287.3 L1138.8 279.6 L1142.8 271.8 L1146.5 263.9 L1150 255.8 L1153.3 247.6 L1156.3 239.3 L1159.1 230.9 L1161.6 222.4 L1163.8 213.8 L1165.8 205.2 L1167.6 196.5 L1169 187.7 L1170.2 178.9 L1171.2 170M666.8 170 L668.3 179.1 L670 188.2 L672 197.2 L674.2 206.1 L676.6 214.9 L679.3 223.7 L682.3 232.3 L685.4 240.9 L688.8 249.3 L692.5 257.6 L696.3 265.7 L700.4 273.7 L704.6 281.6 L709.1 289.3 L713.8 296.9 L718.7 304.2 L723.8 311.4 L729.1 318.5 L734.5 325.3 L740.2 331.9 L746 338.3 L752 344.5 L758.2 350.5 L764.5 356.2 L771 361.8 L777.6 367.1 L784.4 372.1 L791.3 376.9 L798.3 381.5 L805.4 385.8 L812.7 389.8 L820 393.6 L827.5 397.1 L835 400.4 L842.7 403.4 L850.4 406.1 L858.2 408.5 L866 410.6 L873.9 412.5 L881.9 414.1 L889.8 415.4 L897.9 416.4 L905.9 417.1 L913.9 417.6 L922 417.7 L930.1 417.6 L938.1 417.1 L946.1 416.4 L954.2 415.4 L962.1 414.1 L970.1 412.5 L978 410.6 L985.8 408.5 L993.6 406.1 L1001.3 403.4 L1009 400.4 L1016.5 397.1 L1024 393.6 L1031.3 389.8 L1038.6 385.8 L1045.7 381.5 L1052.7 376.9 L1059.6 372.1 L1066.4 367.1 L1073 361.8 L1079.5 356.2 L1085.8 350.5 L1092 344.5 L1098 338.3 L1103.8 331.9 L1109.5 325.3 L1114.9 318.5 L1120.2 311.4 L1125.3 304.2 L1130.2 296.9 L1134.9 289.3 L1139.4 281.6 L1143.6 273.7 L1147.7 265.7 L1151.5 257.6 L1155.2 249.3 L1158.6 240.9 L1161.7 232.3 L1164.7 223.7 L1167.4 214.9 L1169.8 206.1 L1172 197.2 L1174 188.2 L1175.7 179.1 L1177.2 170" stroke="#c06830" stroke-width="0.9" fill="none" clip-path="url(#rb2)"/>
<path d="M711.9 228.7 L723.8 229.5 L724 235.2 L724.4 240.9 L725.2 246.6 L726.2 252.3 L727.6 257.9 L729.3 263.5 L731.2 269 L733.5 274.5 L736.1 279.9 L738.9 285.2 L742 290.5 L745.4 295.6 L749.1 300.6 L753 305.6 L757.2 310.4 L761.7 315.1 L766.4 319.6 L771.3 324.1 L776.5 328.3 L781.9 332.5 L787.5 336.4 L793.3 340.2 L799.3 343.8 L805.5 347.3 L811.9 350.6 L818.4 353.6 L825.2 356.5 L832 359.2 L839 361.7 L846.2 364 L853.4 366.1 L860.8 368 L868.2 369.6 L875.7 371.1 L883.3 372.3 L891 373.3 L898.7 374.1 L906.4 374.7 L914.2 375 L922 375.1 L929.8 375 L937.6 374.7 L945.3 374.1 L953 373.3 L960.7 372.3 L968.3 371.1 L975.8 369.6 L983.2 368 L990.6 366.1 L997.8 364 L1005 361.7 L1012 359.2 L1018.8 356.5 L1025.6 353.6 L1032.1 350.6 L1038.5 347.3 L1044.7 343.8 L1050.7 340.2 L1056.5 336.4 L1062.1 332.5 L1067.5 328.3 L1072.7 324.1 L1077.6 319.6 L1082.3 315.1 L1086.8 310.4 L1091 305.6 L1094.9 300.6 L1098.6 295.6 L1102 290.5 L1105.1 285.2 L1107.9 279.9 L1110.5 274.5 L1112.8 269 L1114.7 263.5 L1116.4 257.9 L1117.8 252.3 L1118.8 246.6 L1119.6 240.9 L1120 235.2 L1120.2 229.5 L1132.1 228.7 L1129.7 262 L1129.4 267.7 L1128.9 273.4 L1128 279.1 L1126.8 284.7 L1125.3 290.3 L1123.5 295.9 L1121.4 301.4 L1119 306.9 L1116.3 312.3 L1113.3 317.6 L1110 322.8 L1106.4 327.9 L1102.5 332.9 L1098.4 337.8 L1094 342.6 L1089.3 347.3 L1084.3 351.8 L1079.2 356.2 L1073.8 360.5 L1068.1 364.5 L1062.2 368.5 L1056.2 372.3 L1049.9 375.9 L1043.4 379.3 L1036.7 382.5 L1029.9 385.6 L1022.9 388.5 L1015.7 391.1 L1008.4 393.6 L1001 395.9 L993.4 398 L985.8 399.8 L978 401.5 L970.2 402.9 L962.3 404.1 L954.3 405.1 L946.3 405.9 L938.2 406.5 L930.1 406.8 L922 406.9 L913.9 406.8 L905.8 406.5 L897.7 405.9 L889.7 405.1 L881.7 404.1 L873.8 402.9 L866 401.5 L858.2 399.8 L850.6 398 L843 395.9 L835.6 393.6 L828.3 391.1 L821.1 388.5 L814.1 385.6 L807.3 382.5 L800.6 379.3 L794.1 375.9 L787.8 372.3 L781.8 368.5 L775.9 364.5 L770.2 360.5 L764.8 356.2 L759.7 351.8 L754.7 347.3 L750 342.6 L745.6 337.8 L741.5 332.9 L737.6 327.9 L734 322.8 L730.7 317.6 L727.7 312.3 L725 306.9 L722.6 301.4 L720.5 295.9 L718.7 290.3 L717.2 284.7 L716 279.1 L715.1 273.4 L714.6 267.7 L714.3 262 Z" fill="url(#vst)"/>
<path d="M805.5 347.3 L811.9 350.6 L818.4 353.6 L825.2 356.5 L832 359.2 L839 361.7 L846.2 364 L853.4 366.1 L860.8 368 L868.2 369.6 L875.7 371.1 L883.3 372.3 L891 373.3 L898.7 374.1 L906.4 374.7 L914.2 375 L922 375.1 L929.8 375 L937.6 374.7 L945.3 374.1 L953 373.3 L960.7 372.3 L968.3 371.1 L975.8 369.6 L983.2 368 L990.6 366.1 L997.8 364 L1005 361.7 L1012 359.2 L1018.8 356.5 L1025.6 353.6 L1032.1 350.6 L1038.5 347.3 L1036.7 382.5 L1029.9 385.6 L1022.9 388.5 L1015.7 391.1 L1008.4 393.6 L1001 395.9 L993.4 398 L985.8 399.8 L978 401.5 L970.2 402.9 L962.3 404.1 L954.3 405.1 L946.3 405.9 L938.2 406.5 L930.1 406.8 L922 406.9 L913.9 406.8 L905.8 406.5 L897.7 405.9 L889.7 405.1 L881.7 404.1 L873.8 402.9 L866 401.5 L858.2 399.8 L850.6 398 L843 395.9 L835.6 393.6 L828.3 391.1 L821.1 388.5 L814.1 385.6 L807.3 382.5 Z" fill="url(#redv)" mask="url(#mRed)"/>
<path d="M711.9 228.7 L723.8 229.5 L724 235.2 L724.4 240.9 L725.2 246.6 L726.2 252.3 L727.6 257.9 L729.3 263.5 L731.2 269 L733.5 274.5 L736.1 279.9 L738.9 285.2 L742 290.5 L745.4 295.6 L749.1 300.6 L753 305.6 L757.2 310.4 L761.7 315.1 L766.4 319.6 L771.3 324.1 L776.5 328.3 L781.9 332.5 L787.5 336.4 L793.3 340.2 L799.3 343.8 L805.5 347.3 L811.9 350.6 L818.4 353.6 L825.2 356.5 L832 359.2 L839 361.7 L846.2 364 L853.4 366.1 L860.8 368 L868.2 369.6 L875.7 371.1 L883.3 372.3 L891 373.3 L898.7 374.1 L906.4 374.7 L914.2 375 L922 375.1 L929.8 375 L937.6 374.7 L945.3 374.1 L953 373.3 L960.7 372.3 L968.3 371.1 L975.8 369.6 L983.2 368 L990.6 366.1 L997.8 364 L1005 361.7 L1012 359.2 L1018.8 356.5 L1025.6 353.6 L1032.1 350.6 L1038.5 347.3 L1044.7 343.8 L1050.7 340.2 L1056.5 336.4 L1062.1 332.5 L1067.5 328.3 L1072.7 324.1 L1077.6 319.6 L1082.3 315.1 L1086.8 310.4 L1091 305.6 L1094.9 300.6 L1098.6 295.6 L1102 290.5 L1105.1 285.2 L1107.9 279.9 L1110.5 274.5 L1112.8 269 L1114.7 263.5 L1116.4 257.9 L1117.8 252.3 L1118.8 246.6 L1119.6 240.9 L1120 235.2 L1120.2 229.5 L1132.1 228.7 L1129.7 262 L1129.4 267.7 L1128.9 273.4 L1128 279.1 L1126.8 284.7 L1125.3 290.3 L1123.5 295.9 L1121.4 301.4 L1119 306.9 L1116.3 312.3 L1113.3 317.6 L1110 322.8 L1106.4 327.9 L1102.5 332.9 L1098.4 337.8 L1094 342.6 L1089.3 347.3 L1084.3 351.8 L1079.2 356.2 L1073.8 360.5 L1068.1 364.5 L1062.2 368.5 L1056.2 372.3 L1049.9 375.9 L1043.4 379.3 L1036.7 382.5 L1029.9 385.6 L1022.9 388.5 L1015.7 391.1 L1008.4 393.6 L1001 395.9 L993.4 398 L985.8 399.8 L978 401.5 L970.2 402.9 L962.3 404.1 L954.3 405.1 L946.3 405.9 L938.2 406.5 L930.1 406.8 L922 406.9 L913.9 406.8 L905.8 406.5 L897.7 405.9 L889.7 405.1 L881.7 404.1 L873.8 402.9 L866 401.5 L858.2 399.8 L850.6 398 L843 395.9 L835.6 393.6 L828.3 391.1 L821.1 388.5 L814.1 385.6 L807.3 382.5 L800.6 379.3 L794.1 375.9 L787.8 372.3 L781.8 368.5 L775.9 364.5 L770.2 360.5 L764.8 356.2 L759.7 351.8 L754.7 347.3 L750 342.6 L745.6 337.8 L741.5 332.9 L737.6 327.9 L734 322.8 L730.7 317.6 L727.7 312.3 L725 306.9 L722.6 301.4 L720.5 295.9 L718.7 290.3 L717.2 284.7 L716 279.1 L715.1 273.4 L714.6 267.7 L714.3 262 Z" fill="url(#gShade)"/>
<clipPath id="rb3"><path d="M705.7 415 L716.3 420 L716.8 425.6 L717.6 431.2 L718.7 436.8 L720.1 442.3 L721.8 447.8 L723.8 453.2 L726 458.6 L728.6 463.9 L731.4 469.2 L734.5 474.3 L737.9 479.4 L741.6 484.4 L745.5 489.3 L749.6 494 L754.1 498.7 L758.7 503.2 L763.6 507.6 L768.8 511.9 L774.1 516 L779.7 519.9 L785.5 520.7 L791.5 520.7 L797.6 520.7 L804 520.7 L810.5 520.7 L817.2 520.7 L824 520.7 L831 520.7 L838.1 520.7 L845.3 520.7 L852.7 520.7 L860.1 520.7 L867.7 520.7 L875.3 520.7 L883 520.7 L890.7 520.7 L898.5 520.7 L906.3 520.7 L914.1 520.7 L922 520.7 L929.9 520.7 L937.7 520.7 L945.5 520.7 L953.3 520.7 L961 520.7 L968.7 520.7 L976.3 520.7 L983.9 520.7 L991.3 520.7 L998.7 520.7 L1005.9 520.7 L1013 520.7 L1020 520.7 L1026.8 520.7 L1033.5 520.7 L1040 520.7 L1046.4 520.7 L1052.5 520.7 L1058.5 520.7 L1064.3 519.9 L1069.9 516 L1075.2 511.9 L1080.4 507.6 L1085.3 503.2 L1089.9 498.7 L1094.4 494 L1098.5 489.3 L1102.4 484.4 L1106.1 479.4 L1109.5 474.3 L1112.6 469.2 L1115.4 463.9 L1118 458.6 L1120.2 453.2 L1122.2 447.8 L1123.9 442.3 L1125.3 436.8 L1126.4 431.2 L1127.2 425.6 L1127.7 420 L1138.3 415 L1139 415 L1139.6 462.9 L1138.1 469 L1136.3 475 L1134.3 480.9 L1132 486.8 L1129.5 492.7 L1126.7 498.4 L1123.7 504.1 L1120.4 509.7 L1116.9 515.2 L1113.1 520.6 L1109.2 525.8 L1105 531 L1100.5 536.1 L1095.9 541 L1091 545.8 L1086 550.4 L1080.7 554.9 L1075.2 559.3 L1069.6 563.5 L1063.8 567.5 L1057.8 571.4 L1051.6 575.1 L1045.3 578.6 L1038.9 582 L1032.3 585.2 L1025.5 588.2 L1018.7 590.9 L1011.7 593.5 L1004.6 596 L997.4 598.2 L990.1 600.2 L982.8 602 L975.3 603.6 L967.8 604.9 L960.3 606.1 L952.7 607.1 L945 607.8 L937.4 608.4 L929.7 608.7 L922 608.8 L914.3 608.7 L906.6 608.4 L899 607.8 L891.3 607.1 L883.7 606.1 L876.2 604.9 L868.7 603.6 L861.2 602 L853.9 600.2 L846.6 598.2 L839.4 596 L832.3 593.5 L825.3 590.9 L818.5 588.2 L811.7 585.2 L805.1 582 L798.7 578.6 L792.4 575.1 L786.2 571.4 L780.2 567.5 L774.4 563.5 L768.8 559.3 L763.3 554.9 L758 550.4 L753 545.8 L748.1 541 L743.5 536.1 L739 531 L734.8 525.8 L730.9 520.6 L727.1 515.2 L723.6 509.7 L720.3 504.1 L717.3 498.4 L714.5 492.7 L712 486.8 L709.7 480.9 L707.7 475 L705.9 469 L704.4 462.9 L705 415 Z"/></clipPath><path d="M705.7 415 L716.3 420 L716.8 425.6 L717.6 431.2 L718.7 436.8 L720.1 442.3 L721.8 447.8 L723.8 453.2 L726 458.6 L728.6 463.9 L731.4 469.2 L734.5 474.3 L737.9 479.4 L741.6 484.4 L745.5 489.3 L749.6 494 L754.1 498.7 L758.7 503.2 L763.6 507.6 L768.8 511.9 L774.1 516 L779.7 519.9 L785.5 520.7 L791.5 520.7 L797.6 520.7 L804 520.7 L810.5 520.7 L817.2 520.7 L824 520.7 L831 520.7 L838.1 520.7 L845.3 520.7 L852.7 520.7 L860.1 520.7 L867.7 520.7 L875.3 520.7 L883 520.7 L890.7 520.7 L898.5 520.7 L906.3 520.7 L914.1 520.7 L922 520.7 L929.9 520.7 L937.7 520.7 L945.5 520.7 L953.3 520.7 L961 520.7 L968.7 520.7 L976.3 520.7 L983.9 520.7 L991.3 520.7 L998.7 520.7 L1005.9 520.7 L1013 520.7 L1020 520.7 L1026.8 520.7 L1033.5 520.7 L1040 520.7 L1046.4 520.7 L1052.5 520.7 L1058.5 520.7 L1064.3 519.9 L1069.9 516 L1075.2 511.9 L1080.4 507.6 L1085.3 503.2 L1089.9 498.7 L1094.4 494 L1098.5 489.3 L1102.4 484.4 L1106.1 479.4 L1109.5 474.3 L1112.6 469.2 L1115.4 463.9 L1118 458.6 L1120.2 453.2 L1122.2 447.8 L1123.9 442.3 L1125.3 436.8 L1126.4 431.2 L1127.2 425.6 L1127.7 420 L1138.3 415 L1139 415 L1139.6 462.9 L1138.1 469 L1136.3 475 L1134.3 480.9 L1132 486.8 L1129.5 492.7 L1126.7 498.4 L1123.7 504.1 L1120.4 509.7 L1116.9 515.2 L1113.1 520.6 L1109.2 525.8 L1105 531 L1100.5 536.1 L1095.9 541 L1091 545.8 L1086 550.4 L1080.7 554.9 L1075.2 559.3 L1069.6 563.5 L1063.8 567.5 L1057.8 571.4 L1051.6 575.1 L1045.3 578.6 L1038.9 582 L1032.3 585.2 L1025.5 588.2 L1018.7 590.9 L1011.7 593.5 L1004.6 596 L997.4 598.2 L990.1 600.2 L982.8 602 L975.3 603.6 L967.8 604.9 L960.3 606.1 L952.7 607.1 L945 607.8 L937.4 608.4 L929.7 608.7 L922 608.8 L914.3 608.7 L906.6 608.4 L899 607.8 L891.3 607.1 L883.7 606.1 L876.2 604.9 L868.7 603.6 L861.2 602 L853.9 600.2 L846.6 598.2 L839.4 596 L832.3 593.5 L825.3 590.9 L818.5 588.2 L811.7 585.2 L805.1 582 L798.7 578.6 L792.4 575.1 L786.2 571.4 L780.2 567.5 L774.4 563.5 L768.8 559.3 L763.3 554.9 L758 550.4 L753 545.8 L748.1 541 L743.5 536.1 L739 531 L734.8 525.8 L730.9 520.6 L727.1 515.2 L723.6 509.7 L720.3 504.1 L717.3 498.4 L714.5 492.7 L712 486.8 L709.7 480.9 L707.7 475 L705.9 469 L704.4 462.9 L705 415 Z" fill="#a35428"/><path d="M714.7 415 L714.8 420.3 L715.2 425.5 L715.9 430.7 L716.7 435.9 L717.9 441.1 L719.2 446.2 L720.9 451.4 L722.7 456.4 L724.9 461.4 L727.2 466.4 L729.8 471.3 L732.6 476.1 L735.7 480.8 L739 485.5 L742.5 490.1 L746.2 494.6 L750.2 499 L754.3 503.3 L758.7 507.5 L763.2 511.5 L768 515.5 L772.9 519.3 L778 523 L783.3 526.6 L788.8 530 L794.4 533.3 L800.2 536.5 L806.1 539.5 L812.2 542.4 L818.4 545.1 L824.7 547.6 L831.1 550 L837.7 552.2 L844.4 554.2 L851.1 556.1 L857.9 557.8 L864.9 559.3 L871.9 560.7 L878.9 561.9 L886 562.9 L893.2 563.7 L900.3 564.3 L907.5 564.8 L914.8 565.1 L922 565.2 L929.2 565.1 L936.5 564.8 L943.7 564.3 L950.8 563.7 L958 562.9 L965.1 561.9 L972.1 560.7 L979.1 559.3 L986.1 557.8 L992.9 556.1 L999.6 554.2 L1006.3 552.2 L1012.9 550 L1019.3 547.6 L1025.6 545.1 L1031.8 542.4 L1037.9 539.5 L1043.8 536.5 L1049.6 533.3 L1055.2 530 L1060.7 526.6 L1066 523 L1071.1 519.3 L1076 515.5 L1080.8 511.5 L1085.3 507.5 L1089.7 503.3 L1093.8 499 L1097.8 494.6 L1101.5 490.1 L1105 485.5 L1108.3 480.8 L1111.4 476.1 L1114.2 471.3 L1116.8 466.4 L1119.1 461.4 L1121.3 456.4 L1123.1 451.4 L1124.8 446.2 L1126.1 441.1 L1127.3 435.9 L1128.1 430.7 L1128.8 425.5 L1129.2 420.3 L1129.3 415M713.3 416.7 L713.5 422 L713.8 427.3 L714.5 432.7 L715.4 437.9 L716.5 443.2 L717.9 448.5 L719.5 453.7 L721.4 458.8 L723.5 463.9 L725.9 469 L728.5 473.9 L731.4 478.8 L734.5 483.7 L737.8 488.4 L741.3 493.1 L745 497.7 L749 502.1 L753.2 506.5 L757.6 510.8 L762.2 514.9 L766.9 519 L771.9 522.9 L777.1 526.6 L782.4 530.3 L787.9 533.8 L793.5 537.1 L799.4 540.3 L805.3 543.4 L811.4 546.3 L817.7 549 L824 551.6 L830.5 554.1 L837.1 556.3 L843.8 558.4 L850.6 560.3 L857.5 562 L864.5 563.6 L871.5 565 L878.6 566.2 L885.8 567.2 L893 568 L900.2 568.7 L907.4 569.2 L914.7 569.4 L922 569.5 L929.3 569.4 L936.6 569.2 L943.8 568.7 L951 568 L958.2 567.2 L965.4 566.2 L972.5 565 L979.5 563.6 L986.5 562 L993.4 560.3 L1000.2 558.4 L1006.9 556.3 L1013.5 554.1 L1020 551.6 L1026.3 549 L1032.6 546.3 L1038.7 543.4 L1044.6 540.3 L1050.5 537.1 L1056.1 533.8 L1061.6 530.3 L1066.9 526.6 L1072.1 522.9 L1077.1 519 L1081.8 514.9 L1086.4 510.8 L1090.8 506.5 L1095 502.1 L1099 497.7 L1102.7 493.1 L1106.2 488.4 L1109.5 483.7 L1112.6 478.8 L1115.5 473.9 L1118.1 469 L1120.5 463.9 L1122.6 458.8 L1124.5 453.7 L1126.1 448.5 L1127.5 443.2 L1128.6 437.9 L1129.5 432.7 L1130.2 427.3 L1130.5 422 L1130.7 416.7M712 418.3 L712.1 423.7 L712.5 429.2 L713.1 434.6 L714 440 L715.1 445.3 L716.5 450.7 L718.2 455.9 L720.1 461.2 L722.2 466.4 L724.6 471.5 L727.2 476.6 L730.1 481.6 L733.2 486.5 L736.5 491.4 L740.1 496.1 L743.9 500.8 L747.9 505.3 L752.1 509.8 L756.5 514.1 L761.1 518.3 L765.9 522.4 L770.9 526.4 L776.1 530.2 L781.5 533.9 L787 537.5 L792.7 540.9 L798.5 544.2 L804.5 547.3 L810.7 550.2 L817 553 L823.4 555.7 L829.9 558.1 L836.6 560.4 L843.3 562.6 L850.2 564.5 L857.1 566.3 L864.1 567.9 L871.2 569.3 L878.3 570.5 L885.5 571.5 L892.8 572.4 L900 573 L907.3 573.5 L914.7 573.8 L922 573.9 L929.3 573.8 L936.7 573.5 L944 573 L951.2 572.4 L958.5 571.5 L965.7 570.5 L972.8 569.3 L979.9 567.9 L986.9 566.3 L993.8 564.5 L1000.7 562.6 L1007.4 560.4 L1014.1 558.1 L1020.6 555.7 L1027 553 L1033.3 550.2 L1039.5 547.3 L1045.5 544.2 L1051.3 540.9 L1057 537.5 L1062.5 533.9 L1067.9 530.2 L1073.1 526.4 L1078.1 522.4 L1082.9 518.3 L1087.5 514.1 L1091.9 509.8 L1096.1 505.3 L1100.1 500.8 L1103.9 496.1 L1107.5 491.4 L1110.8 486.5 L1113.9 481.6 L1116.8 476.6 L1119.4 471.5 L1121.8 466.4 L1123.9 461.2 L1125.8 455.9 L1127.5 450.7 L1128.9 445.3 L1130 440 L1130.9 434.6 L1131.5 429.2 L1131.9 423.7 L1132 418.3M710.6 419.9 L710.7 425.5 L711.1 431 L711.7 436.5 L712.6 442 L713.8 447.4 L715.2 452.9 L716.9 458.2 L718.8 463.6 L720.9 468.9 L723.3 474.1 L726 479.2 L728.9 484.3 L732 489.3 L735.3 494.3 L738.9 499.1 L742.7 503.8 L746.7 508.5 L751 513 L755.4 517.4 L760 521.7 L764.9 525.9 L769.9 529.9 L775.1 533.8 L780.5 537.6 L786.1 541.2 L791.8 544.7 L797.7 548 L803.8 551.2 L810 554.2 L816.3 557 L822.7 559.7 L829.3 562.2 L836 564.6 L842.8 566.7 L849.7 568.7 L856.7 570.5 L863.7 572.1 L870.9 573.6 L878 574.8 L885.3 575.8 L892.6 576.7 L899.9 577.4 L907.3 577.9 L914.6 578.2 L922 578.3 L929.4 578.2 L936.7 577.9 L944.1 577.4 L951.4 576.7 L958.7 575.8 L966 574.8 L973.1 573.6 L980.3 572.1 L987.3 570.5 L994.3 568.7 L1001.2 566.7 L1008 564.6 L1014.7 562.2 L1021.3 559.7 L1027.7 557 L1034 554.2 L1040.2 551.2 L1046.3 548 L1052.2 544.7 L1057.9 541.2 L1063.5 537.6 L1068.9 533.8 L1074.1 529.9 L1079.1 525.9 L1084 521.7 L1088.6 517.4 L1093 513 L1097.3 508.5 L1101.3 503.8 L1105.1 499.1 L1108.7 494.3 L1112 489.3 L1115.1 484.3 L1118 479.2 L1120.7 474.1 L1123.1 468.9 L1125.2 463.6 L1127.1 458.2 L1128.8 452.9 L1130.2 447.4 L1131.4 442 L1132.3 436.5 L1132.9 431 L1133.3 425.5 L1133.4 419.9M709.2 421.6 L709.3 427.2 L709.7 432.8 L710.4 438.4 L711.3 444 L712.4 449.5 L713.8 455.1 L715.5 460.5 L717.4 466 L719.6 471.3 L722 476.7 L724.7 481.9 L727.6 487.1 L730.7 492.2 L734.1 497.2 L737.7 502.1 L741.5 506.9 L745.6 511.6 L749.8 516.2 L754.3 520.7 L759 525.1 L763.9 529.3 L768.9 533.4 L774.2 537.4 L779.6 541.3 L785.2 544.9 L791 548.5 L796.9 551.9 L803 555.1 L809.2 558.1 L815.6 561 L822.1 563.8 L828.7 566.3 L835.4 568.7 L842.3 570.9 L849.2 572.9 L856.2 574.7 L863.3 576.4 L870.5 577.8 L877.8 579.1 L885 580.2 L892.4 581.1 L899.8 581.7 L907.2 582.2 L914.6 582.5 L922 582.6 L929.4 582.5 L936.8 582.2 L944.2 581.7 L951.6 581.1 L959 580.2 L966.2 579.1 L973.5 577.8 L980.7 576.4 L987.8 574.7 L994.8 572.9 L1001.7 570.9 L1008.6 568.7 L1015.3 566.3 L1021.9 563.8 L1028.4 561 L1034.8 558.1 L1041 555.1 L1047.1 551.9 L1053 548.5 L1058.8 544.9 L1064.4 541.3 L1069.8 537.4 L1075.1 533.4 L1080.1 529.3 L1085 525.1 L1089.7 520.7 L1094.2 516.2 L1098.4 511.6 L1102.5 506.9 L1106.3 502.1 L1109.9 497.2 L1113.3 492.2 L1116.4 487.1 L1119.3 481.9 L1122 476.7 L1124.4 471.3 L1126.6 466 L1128.5 460.5 L1130.2 455.1 L1131.6 449.5 L1132.7 444 L1133.6 438.4 L1134.3 432.8 L1134.7 427.2 L1134.8 421.6M707.8 423.2 L707.9 428.9 L708.3 434.6 L709 440.3 L709.9 446 L711.1 451.7 L712.5 457.3 L714.2 462.8 L716.1 468.4 L718.3 473.8 L720.7 479.2 L723.4 484.6 L726.3 489.8 L729.5 495 L732.9 500.1 L736.5 505.1 L740.4 510 L744.4 514.8 L748.7 519.5 L753.2 524 L757.9 528.5 L762.8 532.8 L767.9 537 L773.2 541 L778.7 544.9 L784.3 548.7 L790.1 552.3 L796.1 555.7 L802.2 559 L808.5 562.1 L814.9 565 L821.4 567.8 L828.1 570.4 L834.9 572.8 L841.8 575.1 L848.7 577.1 L855.8 579 L863 580.6 L870.2 582.1 L877.5 583.4 L884.8 584.5 L892.2 585.4 L899.6 586.1 L907.1 586.6 L914.5 586.9 L922 587 L929.5 586.9 L936.9 586.6 L944.4 586.1 L951.8 585.4 L959.2 584.5 L966.5 583.4 L973.8 582.1 L981 580.6 L988.2 579 L995.3 577.1 L1002.2 575.1 L1009.1 572.8 L1015.9 570.4 L1022.6 567.8 L1029.1 565 L1035.5 562.1 L1041.8 559 L1047.9 555.7 L1053.9 552.3 L1059.7 548.7 L1065.3 544.9 L1070.8 541 L1076.1 537 L1081.2 532.8 L1086.1 528.5 L1090.8 524 L1095.3 519.5 L1099.6 514.8 L1103.6 510 L1107.5 505.1 L1111.1 500.1 L1114.5 495 L1117.7 489.8 L1120.6 484.6 L1123.3 479.2 L1125.7 473.8 L1127.9 468.4 L1129.8 462.8 L1131.5 457.3 L1132.9 451.7 L1134.1 446 L1135 440.3 L1135.7 434.6 L1136.1 428.9 L1136.2 423.2M706.4 424.9 L706.6 430.7 L707 436.5 L707.6 442.3 L708.5 448 L709.7 453.8 L711.1 459.5 L712.8 465.1 L714.8 470.7 L717 476.3 L719.4 481.8 L722.1 487.2 L725.1 492.6 L728.2 497.8 L731.7 503 L735.3 508.1 L739.2 513.1 L743.3 518 L747.6 522.7 L752.1 527.4 L756.9 531.9 L761.8 536.3 L766.9 540.5 L772.3 544.6 L777.8 548.6 L783.4 552.4 L789.3 556.1 L795.3 559.5 L801.5 562.9 L807.8 566 L814.2 569 L820.8 571.9 L827.5 574.5 L834.3 577 L841.2 579.2 L848.3 581.3 L855.4 583.2 L862.6 584.9 L869.8 586.4 L877.2 587.7 L884.6 588.8 L892 589.7 L899.5 590.4 L907 590.9 L914.5 591.2 L922 591.3 L929.5 591.2 L937 590.9 L944.5 590.4 L952 589.7 L959.4 588.8 L966.8 587.7 L974.2 586.4 L981.4 584.9 L988.6 583.2 L995.7 581.3 L1002.8 579.2 L1009.7 577 L1016.5 574.5 L1023.2 571.9 L1029.8 569 L1036.2 566 L1042.5 562.9 L1048.7 559.5 L1054.7 556.1 L1060.6 552.4 L1066.2 548.6 L1071.7 544.6 L1077.1 540.5 L1082.2 536.3 L1087.1 531.9 L1091.9 527.4 L1096.4 522.7 L1100.7 518 L1104.8 513.1 L1108.7 508.1 L1112.3 503 L1115.8 497.8 L1118.9 492.6 L1121.9 487.2 L1124.6 481.8 L1127 476.3 L1129.2 470.7 L1131.2 465.1 L1132.9 459.5 L1134.3 453.8 L1135.5 448 L1136.4 442.3 L1137 436.5 L1137.4 430.7 L1137.6 424.9M705 426.5 L705.2 432.4 L705.6 438.3 L706.2 444.2 L707.2 450 L708.3 455.9 L709.8 461.7 L711.5 467.4 L713.4 473.1 L715.7 478.8 L718.1 484.4 L720.8 489.9 L723.8 495.3 L727 500.7 L730.4 505.9 L734.1 511.1 L738 516.2 L742.1 521.1 L746.5 526 L751 530.7 L755.8 535.3 L760.8 539.7 L765.9 544 L771.3 548.2 L776.8 552.2 L782.5 556.1 L788.4 559.8 L794.5 563.4 L800.7 566.8 L807 570 L813.5 573 L820.1 575.9 L826.9 578.6 L833.8 581.1 L840.7 583.4 L847.8 585.5 L855 587.4 L862.2 589.2 L869.5 590.7 L876.9 592 L884.3 593.1 L891.8 594.1 L899.3 594.8 L906.9 595.3 L914.4 595.6 L922 595.7 L929.6 595.6 L937.1 595.3 L944.7 594.8 L952.2 594.1 L959.7 593.1 L967.1 592 L974.5 590.7 L981.8 589.2 L989 587.4 L996.2 585.5 L1003.3 583.4 L1010.2 581.1 L1017.1 578.6 L1023.9 575.9 L1030.5 573 L1037 570 L1043.3 566.8 L1049.5 563.4 L1055.6 559.8 L1061.5 556.1 L1067.2 552.2 L1072.7 548.2 L1078.1 544 L1083.2 539.7 L1088.2 535.3 L1093 530.7 L1097.5 526 L1101.9 521.1 L1106 516.2 L1109.9 511.1 L1113.6 505.9 L1117 500.7 L1120.2 495.3 L1123.2 489.9 L1125.9 484.4 L1128.3 478.8 L1130.6 473.1 L1132.5 467.4 L1134.2 461.7 L1135.7 455.9 L1136.8 450 L1137.8 444.2 L1138.4 438.3 L1138.8 432.4 L1139 426.5M703.7 428.1 L703.8 434.1 L704.2 440.1 L704.9 446.1 L705.8 452.1 L707 458 L708.4 463.9 L710.1 469.7 L712.1 475.5 L714.3 481.3 L716.8 486.9 L719.6 492.5 L722.5 498.1 L725.8 503.5 L729.2 508.9 L732.9 514.1 L736.8 519.2 L741 524.3 L745.4 529.2 L749.9 534 L754.7 538.7 L759.7 543.2 L764.9 547.6 L770.3 551.8 L775.9 555.9 L781.7 559.8 L787.6 563.6 L793.7 567.2 L799.9 570.7 L806.3 573.9 L812.8 577 L819.5 579.9 L826.3 582.7 L833.2 585.2 L840.2 587.6 L847.3 589.7 L854.5 591.7 L861.8 593.4 L869.2 595 L876.6 596.3 L884.1 597.5 L891.6 598.4 L899.2 599.1 L906.8 599.7 L914.4 600 L922 600.1 L929.6 600 L937.2 599.7 L944.8 599.1 L952.4 598.4 L959.9 597.5 L967.4 596.3 L974.8 595 L982.2 593.4 L989.5 591.7 L996.7 589.7 L1003.8 587.6 L1010.8 585.2 L1017.7 582.7 L1024.5 579.9 L1031.2 577 L1037.7 573.9 L1044.1 570.7 L1050.3 567.2 L1056.4 563.6 L1062.3 559.8 L1068.1 555.9 L1073.7 551.8 L1079.1 547.6 L1084.3 543.2 L1089.3 538.7 L1094.1 534 L1098.6 529.2 L1103 524.3 L1107.2 519.2 L1111.1 514.1 L1114.8 508.9 L1118.2 503.5 L1121.5 498.1 L1124.4 492.5 L1127.2 486.9 L1129.7 481.3 L1131.9 475.5 L1133.9 469.7 L1135.6 463.9 L1137 458 L1138.2 452.1 L1139.1 446.1 L1139.8 440.1 L1140.2 434.1 L1140.3 428.1M702.3 429.8 L702.4 435.9 L702.8 441.9 L703.5 448 L704.4 454.1 L705.6 460.1 L707.1 466.1 L708.8 472 L710.8 477.9 L713 483.7 L715.5 489.5 L718.3 495.2 L721.3 500.8 L724.5 506.3 L728 511.8 L731.7 517.1 L735.7 522.3 L739.8 527.4 L744.2 532.4 L748.9 537.3 L753.7 542 L758.7 546.6 L763.9 551.1 L769.4 555.4 L775 559.6 L780.8 563.6 L786.7 567.4 L792.9 571.1 L799.1 574.6 L805.6 577.9 L812.1 581 L818.8 584 L825.7 586.8 L832.6 589.3 L839.7 591.7 L846.9 593.9 L854.1 595.9 L861.4 597.7 L868.8 599.2 L876.3 600.6 L883.8 601.8 L891.4 602.7 L899 603.5 L906.7 604 L914.3 604.3 L922 604.4 L929.7 604.3 L937.3 604 L945 603.5 L952.6 602.7 L960.2 601.8 L967.7 600.6 L975.2 599.2 L982.6 597.7 L989.9 595.9 L997.1 593.9 L1004.3 591.7 L1011.4 589.3 L1018.3 586.8 L1025.2 584 L1031.9 581 L1038.4 577.9 L1044.9 574.6 L1051.1 571.1 L1057.3 567.4 L1063.2 563.6 L1069 559.6 L1074.6 555.4 L1080.1 551.1 L1085.3 546.6 L1090.3 542 L1095.1 537.3 L1099.8 532.4 L1104.2 527.4 L1108.3 522.3 L1112.3 517.1 L1116 511.8 L1119.5 506.3 L1122.7 500.8 L1125.7 495.2 L1128.5 489.5 L1131 483.7 L1133.2 477.9 L1135.2 472 L1136.9 466.1 L1138.4 460.1 L1139.6 454.1 L1140.5 448 L1141.2 441.9 L1141.6 435.9 L1141.7 429.8" stroke="#c06830" stroke-width="0.9" fill="none" clip-path="url(#rb3)"/>
<path d="M705.7 415 L716.3 420 L716.8 425.6 L717.6 431.2 L718.7 436.8 L720.1 442.3 L721.8 447.8 L723.8 453.2 L726 458.6 L728.6 463.9 L731.4 469.2 L734.5 474.3 L737.9 479.4 L741.6 484.4 L745.5 489.3 L749.6 494 L754.1 498.7 L758.7 503.2 L763.6 507.6 L768.8 511.9 L774.1 516 L779.7 519.9 L785.5 520.7 L791.5 520.7 L797.6 520.7 L804 520.7 L810.5 520.7 L817.2 520.7 L824 520.7 L831 520.7 L838.1 520.7 L845.3 520.7 L852.7 520.7 L860.1 520.7 L867.7 520.7 L875.3 520.7 L883 520.7 L890.7 520.7 L898.5 520.7 L906.3 520.7 L914.1 520.7 L922 520.7 L929.9 520.7 L937.7 520.7 L945.5 520.7 L953.3 520.7 L961 520.7 L968.7 520.7 L976.3 520.7 L983.9 520.7 L991.3 520.7 L998.7 520.7 L1005.9 520.7 L1013 520.7 L1020 520.7 L1026.8 520.7 L1033.5 520.7 L1040 520.7 L1046.4 520.7 L1052.5 520.7 L1058.5 520.7 L1064.3 519.9 L1069.9 516 L1075.2 511.9 L1080.4 507.6 L1085.3 503.2 L1089.9 498.7 L1094.4 494 L1098.5 489.3 L1102.4 484.4 L1106.1 479.4 L1109.5 474.3 L1112.6 469.2 L1115.4 463.9 L1118 458.6 L1120.2 453.2 L1122.2 447.8 L1123.9 442.3 L1125.3 436.8 L1126.4 431.2 L1127.2 425.6 L1127.7 420 L1138.3 415 L1138.3 420 L1137.7 422.6 L1136.9 426.1 L1136 430.3 L1134.8 435 L1133.5 440 L1132 445 L1130.2 450.3 L1128.2 456.2 L1126 462.4 L1123.7 468.6 L1121.4 474.5 L1119 480 L1116.7 484.9 L1114.3 489.4 L1111.9 493.7 L1109.4 498 L1106.8 502.3 L1104 507 L1101.3 512 L1098.7 517.1 L1096.1 522.3 L1092.9 527.6 L1089 533 L1084 538.4 L1077.6 544.1 L1069.9 550.2 L1061.5 556.3 L1052.7 562.2 L1044.1 567.5 L1036 572 L1028.4 575.5 L1020.9 578.2 L1013.4 580.4 L1006.2 582.2 L999.3 583.9 L992.7 585.5 L986.6 587.1 L980.9 588.4 L975.5 589.5 L970.2 590.5 L964.8 591.4 L959.1 592.2 L952.7 592.9 L945.6 593.5 L938.4 594 L931.7 594.4 L926.1 594.7 L922 595 L917.9 594.7 L912.3 594.4 L905.6 594 L898.4 593.5 L891.3 592.9 L884.9 592.2 L879.2 591.4 L873.8 590.5 L868.5 589.5 L863.1 588.4 L857.4 587.1 L851.3 585.5 L844.7 583.9 L837.8 582.2 L830.6 580.4 L823.1 578.2 L815.6 575.5 L808 572 L799.9 567.5 L791.3 562.2 L782.5 556.3 L774.1 550.2 L766.4 544.1 L760 538.4 L755 533 L751.1 527.6 L747.9 522.3 L745.3 517.1 L742.7 512 L740 507 L737.2 502.3 L734.6 498 L732.1 493.7 L729.7 489.4 L727.3 484.9 L725 480 L722.6 474.5 L720.3 468.6 L718 462.4 L715.8 456.2 L713.8 450.3 L712 445 L710.5 440 L709.2 435 L708 430.3 L707.1 426.1 L706.3 422.6 L705.7 420 Z" fill="url(#vst)"/>
<path d="M785.5 523.7 L791.5 527.4 L797.6 530.9 L804 534.2 L810.5 537.3 L817.2 540.3 L824 543 L831 545.6 L838.1 548 L845.3 550.2 L852.7 552.2 L860.1 554 L867.7 555.6 L875.3 557 L883 558.1 L890.7 559.1 L898.5 559.8 L906.3 560.4 L914.1 560.7 L922 560.8 L929.9 560.7 L937.7 560.4 L945.5 559.8 L953.3 559.1 L961 558.1 L968.7 557 L976.3 555.6 L983.9 554 L991.3 552.2 L998.7 550.2 L1005.9 548 L1013 545.6 L1020 543 L1026.8 540.3 L1033.5 537.3 L1040 534.2 L1046.4 530.9 L1052.5 527.4 L1058.5 523.7 Z" fill="url(#red)"/>
<path d="M804 534.2 L810.5 537.3 L817.2 540.3 L824 543 L831 545.6 L838.1 548 L845.3 550.2 L852.7 552.2 L860.1 554 L867.7 555.6 L875.3 557 L883 558.1 L890.7 559.1 L898.5 559.8 L906.3 560.4 L914.1 560.7 L922 560.8 L929.9 560.7 L937.7 560.4 L945.5 559.8 L953.3 559.1 L961 558.1 L968.7 557 L976.3 555.6 L983.9 554 L991.3 552.2 L998.7 550.2 L1005.9 548 L1013 545.6 L1020 543 L1026.8 540.3 L1033.5 537.3 L1040 534.2 L1036 572 L1028.4 575.5 L1020.9 578.2 L1013.4 580.4 L1006.2 582.2 L999.3 583.9 L992.7 585.5 L986.6 587.1 L980.9 588.4 L975.5 589.5 L970.2 590.5 L964.8 591.4 L959.1 592.2 L952.7 592.9 L945.6 593.5 L938.4 594 L931.7 594.4 L926.1 594.7 L922 595 L917.9 594.7 L912.3 594.4 L905.6 594 L898.4 593.5 L891.3 592.9 L884.9 592.2 L879.2 591.4 L873.8 590.5 L868.5 589.5 L863.1 588.4 L857.4 587.1 L851.3 585.5 L844.7 583.9 L837.8 582.2 L830.6 580.4 L823.1 578.2 L815.6 575.5 L808 572 Z" fill="url(#redv)" mask="url(#mRed)"/>
<path d="M705.7 415 L716.3 420 L716.8 425.6 L717.6 431.2 L718.7 436.8 L720.1 442.3 L721.8 447.8 L723.8 453.2 L726 458.6 L728.6 463.9 L731.4 469.2 L734.5 474.3 L737.9 479.4 L741.6 484.4 L745.5 489.3 L749.6 494 L754.1 498.7 L758.7 503.2 L763.6 507.6 L768.8 511.9 L774.1 516 L779.7 519.9 L785.5 520.7 L791.5 520.7 L797.6 520.7 L804 520.7 L810.5 520.7 L817.2 520.7 L824 520.7 L831 520.7 L838.1 520.7 L845.3 520.7 L852.7 520.7 L860.1 520.7 L867.7 520.7 L875.3 520.7 L883 520.7 L890.7 520.7 L898.5 520.7 L906.3 520.7 L914.1 520.7 L922 520.7 L929.9 520.7 L937.7 520.7 L945.5 520.7 L953.3 520.7 L961 520.7 L968.7 520.7 L976.3 520.7 L983.9 520.7 L991.3 520.7 L998.7 520.7 L1005.9 520.7 L1013 520.7 L1020 520.7 L1026.8 520.7 L1033.5 520.7 L1040 520.7 L1046.4 520.7 L1052.5 520.7 L1058.5 520.7 L1064.3 519.9 L1069.9 516 L1075.2 511.9 L1080.4 507.6 L1085.3 503.2 L1089.9 498.7 L1094.4 494 L1098.5 489.3 L1102.4 484.4 L1106.1 479.4 L1109.5 474.3 L1112.6 469.2 L1115.4 463.9 L1118 458.6 L1120.2 453.2 L1122.2 447.8 L1123.9 442.3 L1125.3 436.8 L1126.4 431.2 L1127.2 425.6 L1127.7 420 L1138.3 415 L1138.3 420 L1137.7 422.6 L1136.9 426.1 L1136 430.3 L1134.8 435 L1133.5 440 L1132 445 L1130.2 450.3 L1128.2 456.2 L1126 462.4 L1123.7 468.6 L1121.4 474.5 L1119 480 L1116.7 484.9 L1114.3 489.4 L1111.9 493.7 L1109.4 498 L1106.8 502.3 L1104 507 L1101.3 512 L1098.7 517.1 L1096.1 522.3 L1092.9 527.6 L1089 533 L1084 538.4 L1077.6 544.1 L1069.9 550.2 L1061.5 556.3 L1052.7 562.2 L1044.1 567.5 L1036 572 L1028.4 575.5 L1020.9 578.2 L1013.4 580.4 L1006.2 582.2 L999.3 583.9 L992.7 585.5 L986.6 587.1 L980.9 588.4 L975.5 589.5 L970.2 590.5 L964.8 591.4 L959.1 592.2 L952.7 592.9 L945.6 593.5 L938.4 594 L931.7 594.4 L926.1 594.7 L922 595 L917.9 594.7 L912.3 594.4 L905.6 594 L898.4 593.5 L891.3 592.9 L884.9 592.2 L879.2 591.4 L873.8 590.5 L868.5 589.5 L863.1 588.4 L857.4 587.1 L851.3 585.5 L844.7 583.9 L837.8 582.2 L830.6 580.4 L823.1 578.2 L815.6 575.5 L808 572 L799.9 567.5 L791.3 562.2 L782.5 556.3 L774.1 550.2 L766.4 544.1 L760 538.4 L755 533 L751.1 527.6 L747.9 522.3 L745.3 517.1 L742.7 512 L740 507 L737.2 502.3 L734.6 498 L732.1 493.7 L729.7 489.4 L727.3 484.9 L725 480 L722.6 474.5 L720.3 468.6 L718 462.4 L715.8 456.2 L713.8 450.3 L712 445 L710.5 440 L709.2 435 L708 430.3 L707.1 426.1 L706.3 422.6 L705.7 420 Z" fill="url(#gShade)"/>
<path d="M711.5 513 L712.8 519.3 L713 524.9 L713.4 530.5 L714.3 536 L715.4 541.6 L716.8 547.1 L718.6 552.6 L720.7 558 L723 563.3 L725.7 568.6 L728.7 573.8 L732 579 L735.6 584 L739.5 588.9 L743.6 593.8 L748.1 598.5 L752.8 603.1 L757.7 607.5 L762.9 611.8 L768.4 616 L774.1 620.1 L780 623.9 L786.1 627.7 L792.5 631.2 L799 634.6 L805.8 637.8 L812.7 640.8 L819.8 643.6 L827 646.3 L834.4 648.7 L841.9 651 L849.6 653 L857.4 654.8 L865.2 656.4 L873.2 657.9 L881.2 659.1 L889.3 660 L897.4 660.8 L905.6 661.4 L913.8 661.7 L922 661.8 L930.2 661.7 L938.4 661.4 L946.6 660.8 L954.7 660 L962.8 659.1 L970.8 657.9 L978.8 656.4 L986.6 654.8 L994.4 653 L1002.1 651 L1009.6 648.7 L1017 646.3 L1024.2 643.6 L1031.3 640.8 L1038.2 637.8 L1045 634.6 L1051.5 631.2 L1057.9 627.7 L1064 623.9 L1069.9 620.1 L1075.6 616 L1081.1 611.8 L1086.3 607.5 L1091.2 603.1 L1095.9 598.5 L1100.4 593.8 L1104.5 588.9 L1108.4 584 L1112 579 L1115.3 573.8 L1118.3 568.6 L1121 563.3 L1123.3 558 L1125.4 552.6 L1127.2 547.1 L1128.6 541.6 L1129.7 536 L1130.6 530.5 L1131 524.9 L1131.2 519.3 L1132.5 513 L1132.5 513 L1139 519.3 L1138.8 525.2 L1138.3 531.2 L1137.5 537.1 L1136.3 543 L1134.8 548.8 L1133 554.6 L1130.9 560.4 L1128.4 566.1 L1125.6 571.7 L1122.5 577.2 L1119.1 582.6 L1115.3 588 L1111.3 593.2 L1107 598.4 L1102.4 603.4 L1097.6 608.2 L1092.4 613 L1087 617.6 L1081.3 622 L1075.4 626.3 L1069.3 630.4 L1062.9 634.3 L1056.3 638.1 L1049.5 641.7 L1042.6 645.1 L1035.4 648.3 L1028 651.3 L1020.5 654.1 L1012.8 656.7 L1005 659.1 L997.1 661.2 L989.1 663.2 L980.9 664.9 L972.7 666.4 L964.3 667.7 L955.9 668.7 L947.5 669.6 L939 670.1 L930.5 670.5 L922 670.6 L913.5 670.5 L905 670.1 L896.5 669.6 L888.1 668.7 L879.7 667.7 L871.3 666.4 L863.1 664.9 L854.9 663.2 L846.9 661.2 L839 659.1 L831.2 656.7 L823.5 654.1 L816 651.3 L808.6 648.3 L801.4 645.1 L794.5 641.7 L787.7 638.1 L781.1 634.3 L774.7 630.4 L768.6 626.3 L762.7 622 L757 617.6 L751.6 613 L746.4 608.2 L741.6 603.4 L737 598.4 L732.7 593.2 L728.7 588 L724.9 582.6 L721.5 577.2 L718.4 571.7 L715.6 566.1 L713.1 560.4 L711 554.6 L709.2 548.8 L707.7 543 L706.5 537.1 L705.7 531.2 L705.2 525.2 L705 519.3 L711.5 513 Z" fill="url(#vst)"/>
<path d="M805.8 637.8 L812.7 640.8 L819.8 643.6 L827 646.3 L834.4 648.7 L841.9 651 L849.6 653 L857.4 654.8 L865.2 656.4 L873.2 657.9 L881.2 659.1 L889.3 660 L897.4 660.8 L905.6 661.4 L913.8 661.7 L922 661.8 L930.2 661.7 L938.4 661.4 L946.6 660.8 L954.7 660 L962.8 659.1 L970.8 657.9 L978.8 656.4 L986.6 654.8 L994.4 653 L1002.1 651 L1009.6 648.7 L1017 646.3 L1024.2 643.6 L1031.3 640.8 L1038.2 637.8 L1035.4 648.3 L1028 651.3 L1020.5 654.1 L1012.8 656.7 L1005 659.1 L997.1 661.2 L989.1 663.2 L980.9 664.9 L972.7 666.4 L964.3 667.7 L955.9 668.7 L947.5 669.6 L939 670.1 L930.5 670.5 L922 670.6 L913.5 670.5 L905 670.1 L896.5 669.6 L888.1 668.7 L879.7 667.7 L871.3 666.4 L863.1 664.9 L854.9 663.2 L846.9 661.2 L839 659.1 L831.2 656.7 L823.5 654.1 L816 651.3 L808.6 648.3 Z" fill="url(#redv)" mask="url(#mRed)"/>
<path d="M711.5 513 L712.8 519.3 L713 524.9 L713.4 530.5 L714.3 536 L715.4 541.6 L716.8 547.1 L718.6 552.6 L720.7 558 L723 563.3 L725.7 568.6 L728.7 573.8 L732 579 L735.6 584 L739.5 588.9 L743.6 593.8 L748.1 598.5 L752.8 603.1 L757.7 607.5 L762.9 611.8 L768.4 616 L774.1 620.1 L780 623.9 L786.1 627.7 L792.5 631.2 L799 634.6 L805.8 637.8 L812.7 640.8 L819.8 643.6 L827 646.3 L834.4 648.7 L841.9 651 L849.6 653 L857.4 654.8 L865.2 656.4 L873.2 657.9 L881.2 659.1 L889.3 660 L897.4 660.8 L905.6 661.4 L913.8 661.7 L922 661.8 L930.2 661.7 L938.4 661.4 L946.6 660.8 L954.7 660 L962.8 659.1 L970.8 657.9 L978.8 656.4 L986.6 654.8 L994.4 653 L1002.1 651 L1009.6 648.7 L1017 646.3 L1024.2 643.6 L1031.3 640.8 L1038.2 637.8 L1045 634.6 L1051.5 631.2 L1057.9 627.7 L1064 623.9 L1069.9 620.1 L1075.6 616 L1081.1 611.8 L1086.3 607.5 L1091.2 603.1 L1095.9 598.5 L1100.4 593.8 L1104.5 588.9 L1108.4 584 L1112 579 L1115.3 573.8 L1118.3 568.6 L1121 563.3 L1123.3 558 L1125.4 552.6 L1127.2 547.1 L1128.6 541.6 L1129.7 536 L1130.6 530.5 L1131 524.9 L1131.2 519.3 L1132.5 513 L1132.5 513 L1139 519.3 L1138.8 525.2 L1138.3 531.2 L1137.5 537.1 L1136.3 543 L1134.8 548.8 L1133 554.6 L1130.9 560.4 L1128.4 566.1 L1125.6 571.7 L1122.5 577.2 L1119.1 582.6 L1115.3 588 L1111.3 593.2 L1107 598.4 L1102.4 603.4 L1097.6 608.2 L1092.4 613 L1087 617.6 L1081.3 622 L1075.4 626.3 L1069.3 630.4 L1062.9 634.3 L1056.3 638.1 L1049.5 641.7 L1042.6 645.1 L1035.4 648.3 L1028 651.3 L1020.5 654.1 L1012.8 656.7 L1005 659.1 L997.1 661.2 L989.1 663.2 L980.9 664.9 L972.7 666.4 L964.3 667.7 L955.9 668.7 L947.5 669.6 L939 670.1 L930.5 670.5 L922 670.6 L913.5 670.5 L905 670.1 L896.5 669.6 L888.1 668.7 L879.7 667.7 L871.3 666.4 L863.1 664.9 L854.9 663.2 L846.9 661.2 L839 659.1 L831.2 656.7 L823.5 654.1 L816 651.3 L808.6 648.3 L801.4 645.1 L794.5 641.7 L787.7 638.1 L781.1 634.3 L774.7 630.4 L768.6 626.3 L762.7 622 L757 617.6 L751.6 613 L746.4 608.2 L741.6 603.4 L737 598.4 L732.7 593.2 L728.7 588 L724.9 582.6 L721.5 577.2 L718.4 571.7 L715.6 566.1 L713.1 560.4 L711 554.6 L709.2 548.8 L707.7 543 L706.5 537.1 L705.7 531.2 L705.2 525.2 L705 519.3 L711.5 513 Z" fill="url(#gShade)"/>
<path d="M711.5 513 L712.8 519.3 L713 524.9 L713.4 530.5 L714.3 536 L715.4 541.6 L716.8 547.1 L718.6 552.6 L720.7 558 L723 563.3 L725.7 568.6 L728.7 573.8 L732 579 L735.6 584 L739.5 588.9 L743.6 593.8 L748.1 598.5 L752.8 603.1 L757.7 607.5 L762.9 611.8 L768.4 616 L774.1 620.1 L780 623.9 L786.1 627.7 L792.5 631.2 L799 634.6 L805.8 637.8 L812.7 640.8 L819.8 643.6 L827 646.3 L834.4 648.7 L841.9 651 L849.6 653 L857.4 654.8 L865.2 656.4 L873.2 657.9 L881.2 659.1 L889.3 660 L897.4 660.8 L905.6 661.4 L913.8 661.7 L922 661.8 L930.2 661.7 L938.4 661.4 L946.6 660.8 L954.7 660 L962.8 659.1 L970.8 657.9 L978.8 656.4 L986.6 654.8 L994.4 653 L1002.1 651 L1009.6 648.7 L1017 646.3 L1024.2 643.6 L1031.3 640.8 L1038.2 637.8 L1045 634.6 L1051.5 631.2 L1057.9 627.7 L1064 623.9 L1069.9 620.1 L1075.6 616 L1081.1 611.8 L1086.3 607.5 L1091.2 603.1 L1095.9 598.5 L1100.4 593.8 L1104.5 588.9 L1108.4 584 L1112 579 L1115.3 573.8 L1118.3 568.6 L1121 563.3 L1123.3 558 L1125.4 552.6 L1127.2 547.1 L1128.6 541.6 L1129.7 536 L1130.6 530.5 L1131 524.9 L1131.2 519.3 L1132.5 513" stroke="#3d1a08" stroke-width="0.8" fill="none" opacity="0.8"/>
<path d="M724 235.2 L724.4 240.9 L725.2 246.6 L726.2 252.3 L727.6 257.9 L729.3 263.5 L731.2 269 L733.5 274.5 L736.1 279.9 L738.9 285.2 L742 290.5 L745.4 295.6 L749.1 300.6 L753 305.6 L757.2 310.4 L761.7 315.1 L766.4 319.6 L771.3 324.1 L776.5 328.3 L781.9 332.5 L787.5 336.4 L793.3 340.2 L799.3 343.8 L805.5 347.3 L811.9 350.6 L818.4 353.6 L825.2 356.5 L832 359.2 L839 361.7 L846.2 364 L853.4 366.1 L860.8 368 L868.2 369.6 L875.7 371.1 L883.3 372.3 L891 373.3 L898.7 374.1 L906.4 374.7 L914.2 375 L922 375.1 L929.8 375 L937.6 374.7 L945.3 374.1 L953 373.3 L960.7 372.3 L968.3 371.1 L975.8 369.6 L983.2 368 L990.6 366.1 L997.8 364 L1005 361.7 L1012 359.2 L1018.8 356.5 L1025.6 353.6 L1032.1 350.6 L1038.5 347.3 L1044.7 343.8 L1050.7 340.2 L1056.5 336.4 L1062.1 332.5 L1067.5 328.3 L1072.7 324.1 L1077.6 319.6 L1082.3 315.1 L1086.8 310.4 L1091 305.6 L1094.9 300.6 L1098.6 295.6 L1102 290.5 L1105.1 285.2 L1107.9 279.9 L1110.5 274.5 L1112.8 269 L1114.7 263.5 L1116.4 257.9 L1117.8 252.3 L1118.8 246.6 L1119.6 240.9 L1120 235.2" stroke="#3d1a08" stroke-width="0.8" fill="none" opacity="0.6"/>
<path d="M716.3 420 L716.8 425.6 L717.6 431.2 L718.7 436.8 L720.1 442.3 L721.8 447.8 L723.8 453.2 L726 458.6 L728.6 463.9 L731.4 469.2 L734.5 474.3 L737.9 479.4 L741.6 484.4 L745.5 489.3 L749.6 494 L754.1 498.7 L758.7 503.2 L763.6 507.6 L768.8 511.9 L774.1 516 L779.7 519.9" stroke="#3d1a08" stroke-width="0.8" fill="none" opacity="0.6"/>
<path d="M1064.3 519.9 L1069.9 516 L1075.2 511.9 L1080.4 507.6 L1085.3 503.2 L1089.9 498.7 L1094.4 494 L1098.5 489.3 L1102.4 484.4 L1106.1 479.4 L1109.5 474.3 L1112.6 469.2 L1115.4 463.9 L1118 458.6 L1120.2 453.2 L1122.2 447.8 L1123.9 442.3 L1125.3 436.8 L1126.4 431.2 L1127.2 425.6" stroke="#3d1a08" stroke-width="0.8" fill="none" opacity="0.6"/>
<path d="M636 184 L724 184 L714 200 L650 200 Z" fill="url(#ring)"/><path d="M636 184 L650 200 L651 229 L636 229 Z" fill="url(#vst)"/><path d="M629 257.5 L712 257.5 L706 274 L645 274 Z" fill="url(#ring)"/><path d="M629 257.5 L645.8 274.6 L638.7 415 L623 416 Z" fill="url(#vst)"/><path d="M645.8 274.6 L653 415 L638.7 415 Z" fill="#7a3a1b"/><path d="M620 447 L710 447 L704 461 L636 461 Z" fill="url(#ring)"/><path d="M620 447 L636 461 L639 513 L617 513 Z" fill="url(#vst)"/><path d="M632 229 L710.5 229 L710.5 257.5 L630 257.5 Z" fill="url(#red)"/><path d="M616 416 L703 416 L703 447 L614 447 Z" fill="url(#red)"/><path d="M610 513 L711 513 L711 523 L610 523 Z" fill="url(#red)"/><path d="M628.5 178 L725.8 178 L725.5 184 L637 184 L619 513 L610 513 Z" fill="url(#red)"/>
<path d="M1118 184 L1200 184 L1189 200 L1127 200 Z" fill="url(#ring)"/><path d="M1200 184 L1203 229 L1189 229 L1189 200 Z" fill="url(#vst)"/><path d="M1132 257.5 L1214 257.5 L1196 274 L1138 274 Z" fill="url(#ring)"/><path d="M1214 257.5 L1219 416 L1196 416 L1193 274.6 Z" fill="url(#vst)"/><path d="M1193 274.6 L1196 415 L1186 415 Z" fill="#7e3d1c"/><path d="M1131 447 L1220 447 L1204 461 L1138 461 Z" fill="url(#ring)"/><path d="M1220 447 L1223 513 L1205 513 L1204 461 Z" fill="url(#vst)"/><path d="M1132.5 229 L1210 229 L1212 257.5 L1132.5 257.5 Z" fill="url(#red)"/><path d="M1139.4 416 L1222 416 L1224 447 L1139.4 447 Z" fill="url(#red)"/><path d="M1131.4 513 L1228.2 513 L1228.2 523 L1131.4 523 Z" fill="url(#red)"/><path d="M1117.5 178 L1209.3 178.3 L1228.2 513 L1219 513 L1200 184 L1117.8 184 Z" fill="url(#red)"/>
<rect x="1524" y="0" width="341" height="481" fill="rgba(28,28,28,0.8)"/>
<rect x="1524" y="0" width="341" height="1.2" fill="#5e5e6c"/>
<rect x="1524" y="0" width="1" height="481" fill="#4e4e5e"/>
<rect x="1864.6" y="0" width="1" height="481" fill="#d8d8d8"/>
<rect x="1524" y="480" width="341" height="1" fill="#4a4a5a"/>
<rect x="1525" y="1.2" width="339" height="29.5" fill="rgba(10,10,10,0.4)"/>
<rect x="1525" y="30.7" width="339" height="21.3" fill="rgba(60,60,60,0.15)"/>
<rect x="1524.5" y="52" width="340" height="1.2" fill="#a9a9a9"/>
<rect x="1524.5" y="377.6" width="340" height="1.2" fill="#a9a9a9"/>
<path d="M1538 16.5 L1544 11.5 L1550 16.5 M1538 20.5 L1544 15.5 L1550 20.5" stroke="#e8e8e8" stroke-width="1.3" fill="none"/>
<text x="1563.5" y="20" font-family='"Liberation Sans", sans-serif' font-size="12.3" font-weight="bold" fill="#ffffff">Color Scheme</text>
<rect x="1656" y="8.8" width="196" height="19.6" rx="3" fill="#1d1d1d" stroke="#4a4a4e" stroke-width="1"/>
<path d="M1660.5 17.5 L1665.5 21.5 L1670.5 17.5" stroke="#e8e8e8" stroke-width="1.2" fill="none"/>
<text x="1680" y="23" font-family='"Liberation Sans", sans-serif' font-size="13" fill="#ffffff">Line Type</text>
<text x="1536.5" y="45" font-family='"Liberation Sans", sans-serif' font-size="12.7" font-weight="bold" fill="#ffffff">Line Type</text>
<text x="1662" y="45" font-family='"Liberation Sans", sans-serif' font-size="12.7" font-weight="bold" fill="#ffffff">Time</text>
<text x="1716.5" y="45" font-family='"Liberation Sans", sans-serif' font-size="12.7" font-weight="bold" fill="#ffffff">Percent</text>
<text x="1803.2" y="45" font-family='"Liberation Sans", sans-serif' font-size="12.7" font-weight="bold" fill="#ffffff">Display</text>
<rect x="1537" y="59" width="9" height="9" fill="#ffdf47"/>
<text x="1554.5" y="68" font-family='"Liberation Sans", sans-serif' font-size="13" fill="#ececec">Inner wall</text>
<text x="1662" y="68" font-family='"Liberation Sans", sans-serif' font-size="13" fill="#ececec">25m27s</text>
<text x="1716.5" y="68" font-family='"Liberation Sans", sans-serif' font-size="13" fill="#ececec">16.8%</text>
<rect x="1825" y="56.3" width="14.8" height="14.3" fill="#535353"/>
<path d="M1828 63.5 L1831 67 L1837 60" stroke="#00c050" stroke-width="2" fill="none"/>
<rect x="1537" y="80" width="9" height="9" fill="#ff7a2e"/>
<text x="1554.5" y="89" font-family='"Liberation Sans", sans-serif' font-size="13" fill="#ececec">Outer wall</text>
<text x="1662" y="89" font-family='"Liberation Sans", sans-serif' font-size="13" fill="#ececec">26m37s</text>
<text x="1716.5" y="89" font-family='"Liberation Sans", sans-serif' font-size="13" fill="#ececec">17.6%</text>
<rect x="1825" y="77.3" width="14.8" height="14.3" fill="#535353"/>
<path d="M1828 84.5 L1831 88 L1837 81" stroke="#00c050" stroke-width="2" fill="none"/>
<rect x="1537" y="101" width="9" height="9" fill="#b02a28"/>
<text x="1554.5" y="110" font-family='"Liberation Sans", sans-serif' font-size="13" fill="#ececec">Sparse infill</text>
<text x="1662" y="110" font-family='"Liberation Sans", sans-serif' font-size="13" fill="#ececec">52m1s</text>
<text x="1716.5" y="110" font-family='"Liberation Sans", sans-serif' font-size="13" fill="#ececec">34.3%</text>
<rect x="1825" y="98.3" width="14.8" height="14.3" fill="#535353"/>
<path d="M1828 105.5 L1831 109 L1837 102" stroke="#00c050" stroke-width="2" fill="none"/>
<rect x="1537" y="122" width="9" height="9" fill="#9a47d8"/>
<text x="1554.5" y="131" font-family='"Liberation Sans", sans-serif' font-size="13" fill="#ececec">Internal solid infill</text>
<text x="1662" y="131" font-family='"Liberation Sans", sans-serif' font-size="13" fill="#ececec">13m42s</text>
<text x="1716.5" y="131" font-family='"Liberation Sans", sans-serif' font-size="13" fill="#ececec">9.0%</text>
<rect x="1825" y="119.3" width="14.8" height="14.3" fill="#535353"/>
<path d="M1828 126.5 L1831 130 L1837 123" stroke="#00c050" stroke-width="2" fill="none"/>
<rect x="1537" y="143" width="9" height="9" fill="#f23a3a"/>
<text x="1554.5" y="152" font-family='"Liberation Sans", sans-serif' font-size="13" fill="#ececec">Top surface</text>
<text x="1662" y="152" font-family='"Liberation Sans", sans-serif' font-size="13" fill="#ececec">4m8s</text>
<text x="1716.5" y="152" font-family='"Liberation Sans", sans-serif' font-size="13" fill="#ececec">2.7%</text>
<rect x="1825" y="140.3" width="14.8" height="14.3" fill="#535353"/>
<path d="M1828 147.5 L1831 151 L1837 144" stroke="#00c050" stroke-width="2" fill="none"/>
<rect x="1537" y="164" width="9" height="9" fill="#6c5bd2"/>
<text x="1554.5" y="173" font-family='"Liberation Sans", sans-serif' font-size="13" fill="#ececec">Bottom surface</text>
<text x="1662" y="173" font-family='"Liberation Sans", sans-serif' font-size="13" fill="#ececec">4m4s</text>
<text x="1716.5" y="173" font-family='"Liberation Sans", sans-serif' font-size="13" fill="#ececec">2.7%</text>
<rect x="1825" y="161.3" width="14.8" height="14.3" fill="#535353"/>
<path d="M1828 168.5 L1831 172 L1837 165" stroke="#00c050" stroke-width="2" fill="none"/>
<rect x="1537" y="185" width="9" height="9" fill="#4d82c8"/>
<text x="1554.5" y="194" font-family='"Liberation Sans", sans-serif' font-size="13" fill="#ececec">Bridge</text>
<text x="1662" y="194" font-family='"Liberation Sans", sans-serif' font-size="13" fill="#ececec">5m24s</text>
<text x="1716.5" y="194" font-family='"Liberation Sans", sans-serif' font-size="13" fill="#ececec">3.6%</text>
<rect x="1825" y="182.3" width="14.8" height="14.3" fill="#535353"/>
<path d="M1828 189.5 L1831 193 L1837 186" stroke="#00c050" stroke-width="2" fill="none"/>
<rect x="1537" y="206" width="9" height="9" fill="#ffffff"/>
<text x="1554.5" y="215" font-family='"Liberation Sans", sans-serif' font-size="13" fill="#ececec">Gap infill</text>
<text x="1662" y="215" font-family='"Liberation Sans", sans-serif' font-size="13" fill="#ececec">2s</text>
<text x="1716.5" y="215" font-family='"Liberation Sans", sans-serif' font-size="13" fill="#ececec">&lt;0.1%</text>
<rect x="1825" y="203.3" width="14.8" height="14.3" fill="#535353"/>
<path d="M1828 210.5 L1831 214 L1837 207" stroke="#00c050" stroke-width="2" fill="none"/>
<rect x="1537" y="227" width="9" height="9" fill="#52d093"/>
<text x="1554.5" y="236" font-family='"Liberation Sans", sans-serif' font-size="13" fill="#ececec">Custom</text>
<text x="1662" y="236" font-family='"Liberation Sans", sans-serif' font-size="13" fill="#ececec">7m0s</text>
<text x="1716.5" y="236" font-family='"Liberation Sans", sans-serif' font-size="13" fill="#ececec">4.6%</text>
<rect x="1825" y="224.3" width="14.8" height="14.3" fill="#535353"/>
<path d="M1828 231.5 L1831 235 L1837 228" stroke="#00c050" stroke-width="2" fill="none"/>
<rect x="1537" y="248" width="9" height="9" fill="#3b4aa3"/>
<text x="1554.5" y="257" font-family='"Liberation Sans", sans-serif' font-size="13" fill="#ececec">Travel</text>
<text x="1662" y="257" font-family='"Liberation Sans", sans-serif' font-size="13" fill="#ececec">13m28s</text>
<text x="1716.5" y="257" font-family='"Liberation Sans", sans-serif' font-size="13" fill="#ececec">8.9%</text>
<rect x="1825" y="245.3" width="14.8" height="14.3" fill="#535353"/>
<rect x="1537" y="269" width="9" height="9" fill="#d22ed8"/>
<text x="1554.5" y="278" font-family='"Liberation Sans", sans-serif' font-size="13" fill="#ececec">Retract</text>
<rect x="1825" y="266.3" width="14.8" height="14.3" fill="#535353"/>
<rect x="1537" y="290" width="9" height="9" fill="#3fb2d8"/>
<text x="1554.5" y="299" font-family='"Liberation Sans", sans-serif' font-size="13" fill="#ececec">Unretract</text>
<rect x="1825" y="287.3" width="14.8" height="14.3" fill="#535353"/>
<rect x="1537" y="311" width="9" height="9" fill="#fff200"/>
<text x="1554.5" y="320" font-family='"Liberation Sans", sans-serif' font-size="13" fill="#ececec">Wipe</text>
<rect x="1825" y="308.3" width="14.8" height="14.3" fill="#535353"/>
<rect x="1537" y="332" width="9" height="9" fill="#e6e6e6"/>
<text x="1554.5" y="341" font-family='"Liberation Sans", sans-serif' font-size="13" fill="#ececec">Seams</text>
<rect x="1825" y="329.3" width="14.8" height="14.3" fill="#535353"/>
<path d="M1828 336.5 L1831 340 L1837 333" stroke="#00c050" stroke-width="2" fill="none"/>
<text x="1536.5" y="371.5" font-family='"Liberation Sans", sans-serif' font-size="12.7" font-weight="bold" fill="#ffffff">Total Estimation</text>
<text x="1536.5" y="394.3" font-family='"Liberation Sans", sans-serif' font-size="13" fill="#ececec">Filament:</text>
<text x="1660.5" y="394.3" font-family='"Liberation Sans", sans-serif' font-size="13" fill="#ececec">37.86 m</text>
<text x="1722.5" y="394.3" font-family='"Liberation Sans", sans-serif' font-size="13" fill="#ececec">113.84 g</text>
<text x="1536.5" y="413.1" font-family='"Liberation Sans", sans-serif' font-size="13" fill="#ececec">Cost:</text>
<text x="1660.5" y="413.1" font-family='"Liberation Sans", sans-serif' font-size="13" fill="#ececec">2.62</text>
<text x="1536.5" y="431.9" font-family='"Liberation Sans", sans-serif' font-size="13" fill="#ececec">Prepare time:</text>
<text x="1660.5" y="431.9" font-family='"Liberation Sans", sans-serif' font-size="13" fill="#ececec">6m45s</text>
<text x="1536.5" y="450.7" font-family='"Liberation Sans", sans-serif' font-size="13" fill="#ececec">Model printing time:</text>
<text x="1660.5" y="450.7" font-family='"Liberation Sans", sans-serif' font-size="13" fill="#ececec">2h25m</text>
<text x="1536.5" y="469.5" font-family='"Liberation Sans", sans-serif' font-size="13" fill="#ececec">Total time:</text>
<text x="1660.5" y="469.5" font-family='"Liberation Sans", sans-serif' font-size="13" fill="#ececec">2h32m</text>
<rect x="1611" y="1224" width="207.5" height="60" rx="8" fill="#f3f3f3" stroke="#dcdcdc" stroke-width="0.8"/>
<rect x="1627" y="1240" width="16" height="16" rx="3.5" fill="#111"/>
<ellipse cx="1632.2" cy="1248" rx="2.3" ry="3.7" fill="none" stroke="#1d9bf0" stroke-width="2.2"/>
<path d="M1641.2 1245.5 A2.6 3.7 0 1 0 1641.2 1250.5" fill="none" stroke="#2a6ef2" stroke-width="2.2"/>
<path d="M1638 1244.3 A2.6 3.7 0 0 1 1641.2 1245.8" fill="none" stroke="#3ccf5a" stroke-width="2.2"/>
<rect x="1670" y="1240" width="13" height="16" fill="#c45ce8"/><rect x="1679" y="1248" width="4" height="3" fill="#a443d6"/><rect x="1679" y="1251" width="4" height="2.5" fill="#8d30c0"/><rect x="1679" y="1253.5" width="4" height="2.5" fill="#7422a8"/>
<rect x="1667" y="1243" width="10.5" height="10.5" rx="0.8" fill="#7426a8"/>
<path d="M1669.6 1251.3 V1245.2 L1674.6 1251.3 V1245.2" fill="none" stroke="#fff" stroke-width="1.5"/>
<rect x="1708" y="1243" width="14" height="10.2" fill="#2f72c0"/>
<circle cx="1715" cy="1248.1" r="2.9" fill="#fff"/><circle cx="1715" cy="1248.1" r="1.1" fill="#2f72c0"/>
<path d="M1715 1244.4 v1 M1715 1250.8 v1 M1711.3 1248.1 h1 M1717.7 1248.1 h1" stroke="#fff" stroke-width="1.2"/>
<path d="M1748.5 1243.5 a1.6 1.6 0 0 1 3.2 0 v3 h-3.2 z M1752.8 1240.6 a1.6 1.6 0 0 1 3.2 0 v5.9 h-3.2 z M1747.5 1247.5 h4.2 v3.2 h-4.2 a1.6 1.6 0 0 1 0 -3.2 z M1749.5 1251.5 h2.2 v3.2 a1.6 1.6 0 0 1 -2.2 0 z" fill="#fff" stroke="#8a8a8a" stroke-width="0.7"/>
<circle cx="1757.5" cy="1251.2" r="4.6" fill="#00c6ef"/>
<path d="M1790.8 1246.2 h7 v9.8 h-7 z M1792 1240.5 h4.8 v5.7 h-4.8 z" fill="none" stroke="#1a1a1a" stroke-width="1.1"/>
<rect x="1793.1" y="1242" width="1" height="1.3" fill="#1a1a1a"/><rect x="1795" y="1242" width="1" height="1.3" fill="#1a1a1a"/>
<path d="M1797.2 1253.6 l1.8 1.8 l3.8 -4.4" fill="none" stroke="#333" stroke-width="0.9"/>
</svg>
</body></html>
